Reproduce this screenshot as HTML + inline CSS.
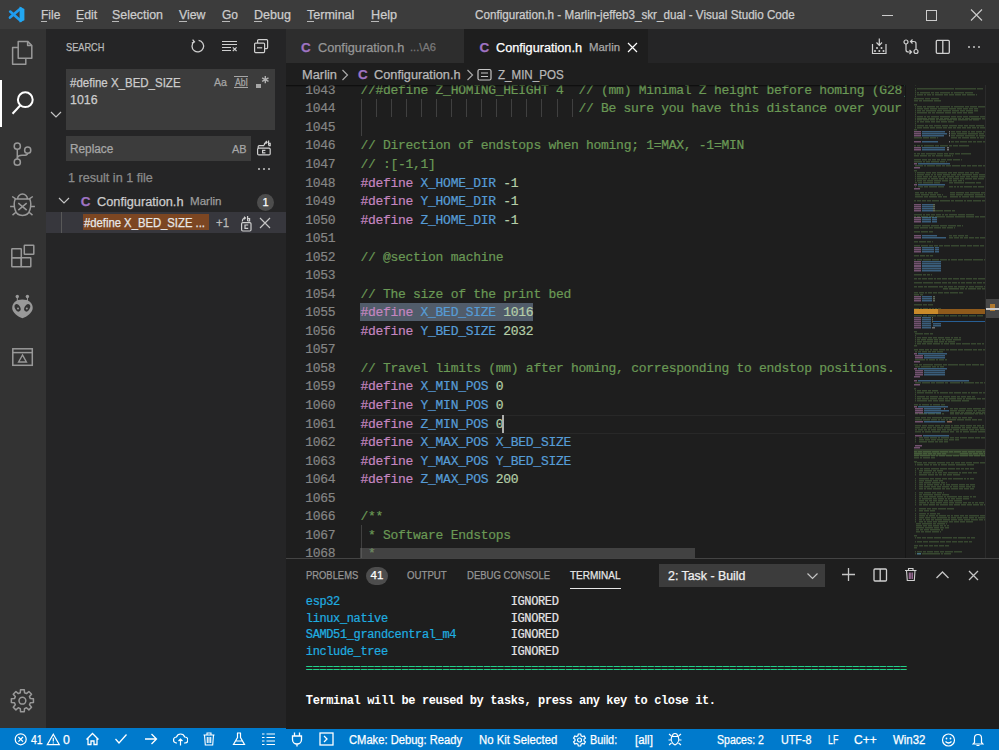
<!DOCTYPE html>
<html><head><meta charset="utf-8"><style>
html,body{margin:0;padding:0;width:999px;height:750px;overflow:hidden;background:#1e1e1e;position:relative;font-family:"Liberation Sans",sans-serif;}
</style></head><body>
<div style="position:absolute;left:0px;top:0px;width:999px;height:29px;background:#3c3c3c;"></div>
<div style="position:absolute;left:0px;top:29px;width:46px;height:700px;background:#333333;"></div>
<div style="position:absolute;left:46px;top:29px;width:240px;height:700px;background:#252526;"></div>
<div style="position:absolute;left:286px;top:29px;width:713px;height:34px;background:#252526;"></div>
<div style="position:absolute;left:286px;top:63px;width:713px;height:666px;background:#1e1e1e;"></div>
<div style="position:absolute;left:0px;top:728px;width:999px;height:22px;background:#007acc;"></div>
<div style="position:absolute;left:41.40px;top:9.49px;font-size:12.3px;line-height:12.3px;color:#cccccc;white-space:pre;font-family:'Liberation Sans', sans-serif;transform:scaleX(0.9747);transform-origin:0.00px 0;-webkit-text-stroke:0.25px #cccccc;">File</div>
<div style="position:absolute;left:76.00px;top:9.49px;font-size:12.3px;line-height:12.3px;color:#cccccc;white-space:pre;font-family:'Liberation Sans', sans-serif;transform:scaleX(1.0000);transform-origin:0.00px 0;-webkit-text-stroke:0.25px #cccccc;">Edit</div>
<div style="position:absolute;left:112.00px;top:9.49px;font-size:12.3px;line-height:12.3px;color:#cccccc;white-space:pre;font-family:'Liberation Sans', sans-serif;transform:scaleX(1.0079);transform-origin:0.00px 0;-webkit-text-stroke:0.25px #cccccc;">Selection</div>
<div style="position:absolute;left:179.00px;top:9.49px;font-size:12.3px;line-height:12.3px;color:#cccccc;white-space:pre;font-family:'Liberation Sans', sans-serif;transform:scaleX(1.0000);transform-origin:0.00px 0;-webkit-text-stroke:0.25px #cccccc;">View</div>
<div style="position:absolute;left:221.60px;top:9.49px;font-size:12.3px;line-height:12.3px;color:#cccccc;white-space:pre;font-family:'Liberation Sans', sans-serif;transform:scaleX(0.9756);transform-origin:0.00px 0;-webkit-text-stroke:0.25px #cccccc;">Go</div>
<div style="position:absolute;left:253.60px;top:9.49px;font-size:12.3px;line-height:12.3px;color:#cccccc;white-space:pre;font-family:'Liberation Sans', sans-serif;transform:scaleX(1.0166);transform-origin:0.00px 0;-webkit-text-stroke:0.25px #cccccc;">Debug</div>
<div style="position:absolute;left:307.00px;top:9.49px;font-size:12.3px;line-height:12.3px;color:#cccccc;white-space:pre;font-family:'Liberation Sans', sans-serif;transform:scaleX(1.0194);transform-origin:0.00px 0;-webkit-text-stroke:0.25px #cccccc;">Terminal</div>
<div style="position:absolute;left:370.60px;top:9.49px;font-size:12.3px;line-height:12.3px;color:#cccccc;white-space:pre;font-family:'Liberation Sans', sans-serif;transform:scaleX(1.0277);transform-origin:0.00px 0;-webkit-text-stroke:0.25px #cccccc;">Help</div>
<div style="position:absolute;left:474.70px;top:9.49px;font-size:12.3px;line-height:12.3px;color:#cccccc;white-space:pre;font-family:'Liberation Sans', sans-serif;transform:scaleX(0.9484);transform-origin:0.00px 0;-webkit-text-stroke:0.25px #cccccc;">Configuration.h - Marlin-jeffeb3_skr_dual - Visual Studio Code</div>
<div style="position:absolute;left:360px;top:415.21999999999997px;width:545px;height:18.5px;background:transparent;box-sizing:border-box;border-top:1.5px solid #282828;border-bottom:1.5px solid #282828;"></div>
<div style="position:absolute;left:360px;top:303px;width:173px;height:18px;background:#515c6a;"></div>
<div style="position:absolute;left:361.0px;top:98.54px;width:1px;height:18.54px;background:#404040;"></div>
<div style="position:absolute;left:376.04px;top:98.54px;width:1px;height:18.54px;background:#404040;"></div>
<div style="position:absolute;left:391.08px;top:98.54px;width:1px;height:18.54px;background:#404040;"></div>
<div style="position:absolute;left:406.12px;top:98.54px;width:1px;height:18.54px;background:#404040;"></div>
<div style="position:absolute;left:421.15999999999997px;top:98.54px;width:1px;height:18.54px;background:#404040;"></div>
<div style="position:absolute;left:436.2px;top:98.54px;width:1px;height:18.54px;background:#404040;"></div>
<div style="position:absolute;left:451.24px;top:98.54px;width:1px;height:18.54px;background:#404040;"></div>
<div style="position:absolute;left:466.28px;top:98.54px;width:1px;height:18.54px;background:#404040;"></div>
<div style="position:absolute;left:481.32px;top:98.54px;width:1px;height:18.54px;background:#404040;"></div>
<div style="position:absolute;left:496.36px;top:98.54px;width:1px;height:18.54px;background:#404040;"></div>
<div style="position:absolute;left:511.4px;top:98.54px;width:1px;height:18.54px;background:#404040;"></div>
<div style="position:absolute;left:526.4399999999999px;top:98.54px;width:1px;height:18.54px;background:#404040;"></div>
<div style="position:absolute;left:541.48px;top:98.54px;width:1px;height:18.54px;background:#404040;"></div>
<div style="position:absolute;left:556.52px;top:98.54px;width:1px;height:18.54px;background:#404040;"></div>
<div style="position:absolute;left:571.5600000000001px;top:98.54px;width:1px;height:18.54px;background:#404040;"></div>
<div style="position:absolute;left:361.0px;top:117.08px;width:1px;height:18.54px;background:#404040;"></div>
<div style="position:absolute;left:361.0px;top:524.96px;width:1px;height:37.08px;background:#404040;"></div>
<div style="position:absolute;left:360.40px;top:83.84px;font-size:13px;line-height:13px;color:#6a9955;white-space:pre;font-family:'Liberation Mono',monospace;letter-spacing:-0.280px;-webkit-text-stroke:0.2px #6a9955;">//#define Z_HOMING_HEIGHT 4  // (mm) Minimal Z height before homing (G28) for Z clearance above the bed, clamps, ...</div>
<div style="position:absolute;left:578.48px;top:102.38px;font-size:13px;line-height:13px;color:#6a9955;white-space:pre;font-family:'Liberation Mono',monospace;letter-spacing:-0.280px;-webkit-text-stroke:0.2px #6a9955;">// Be sure you have this distance over your Z_MAX_POS in case.</div>
<div style="position:absolute;left:360.40px;top:139.46px;font-size:13px;line-height:13px;color:#6a9955;white-space:pre;font-family:'Liberation Mono',monospace;letter-spacing:-0.280px;-webkit-text-stroke:0.2px #6a9955;">// Direction of endstops when homing; 1=MAX, -1=MIN</div>
<div style="position:absolute;left:360.40px;top:158.00px;font-size:13px;line-height:13px;color:#6a9955;white-space:pre;font-family:'Liberation Mono',monospace;letter-spacing:-0.280px;-webkit-text-stroke:0.2px #6a9955;">// :[-1,1]</div>
<div style="position:absolute;left:360.40px;top:176.54px;font-size:13px;line-height:13px;color:#c586c0;white-space:pre;font-family:'Liberation Mono',monospace;letter-spacing:-0.280px;-webkit-text-stroke:0.2px #c586c0;">#define</div>
<div style="position:absolute;left:420.56px;top:176.54px;font-size:13px;line-height:13px;color:#569cd6;white-space:pre;font-family:'Liberation Mono',monospace;letter-spacing:-0.280px;-webkit-text-stroke:0.2px #569cd6;">X_HOME_DIR</div>
<div style="position:absolute;left:503.28px;top:176.54px;font-size:13px;line-height:13px;color:#b5cea8;white-space:pre;font-family:'Liberation Mono',monospace;letter-spacing:-0.280px;-webkit-text-stroke:0.2px #b5cea8;">-1</div>
<div style="position:absolute;left:360.40px;top:195.08px;font-size:13px;line-height:13px;color:#c586c0;white-space:pre;font-family:'Liberation Mono',monospace;letter-spacing:-0.280px;-webkit-text-stroke:0.2px #c586c0;">#define</div>
<div style="position:absolute;left:420.56px;top:195.08px;font-size:13px;line-height:13px;color:#569cd6;white-space:pre;font-family:'Liberation Mono',monospace;letter-spacing:-0.280px;-webkit-text-stroke:0.2px #569cd6;">Y_HOME_DIR</div>
<div style="position:absolute;left:503.28px;top:195.08px;font-size:13px;line-height:13px;color:#b5cea8;white-space:pre;font-family:'Liberation Mono',monospace;letter-spacing:-0.280px;-webkit-text-stroke:0.2px #b5cea8;">-1</div>
<div style="position:absolute;left:360.40px;top:213.62px;font-size:13px;line-height:13px;color:#c586c0;white-space:pre;font-family:'Liberation Mono',monospace;letter-spacing:-0.280px;-webkit-text-stroke:0.2px #c586c0;">#define</div>
<div style="position:absolute;left:420.56px;top:213.62px;font-size:13px;line-height:13px;color:#569cd6;white-space:pre;font-family:'Liberation Mono',monospace;letter-spacing:-0.280px;-webkit-text-stroke:0.2px #569cd6;">Z_HOME_DIR</div>
<div style="position:absolute;left:503.28px;top:213.62px;font-size:13px;line-height:13px;color:#b5cea8;white-space:pre;font-family:'Liberation Mono',monospace;letter-spacing:-0.280px;-webkit-text-stroke:0.2px #b5cea8;">-1</div>
<div style="position:absolute;left:360.40px;top:250.70px;font-size:13px;line-height:13px;color:#6a9955;white-space:pre;font-family:'Liberation Mono',monospace;letter-spacing:-0.280px;-webkit-text-stroke:0.2px #6a9955;">// @section machine</div>
<div style="position:absolute;left:360.40px;top:287.78px;font-size:13px;line-height:13px;color:#6a9955;white-space:pre;font-family:'Liberation Mono',monospace;letter-spacing:-0.280px;-webkit-text-stroke:0.2px #6a9955;">// The size of the print bed</div>
<div style="position:absolute;left:360.40px;top:306.32px;font-size:13px;line-height:13px;color:#c586c0;white-space:pre;font-family:'Liberation Mono',monospace;letter-spacing:-0.280px;-webkit-text-stroke:0.2px #c586c0;">#define</div>
<div style="position:absolute;left:420.56px;top:306.32px;font-size:13px;line-height:13px;color:#569cd6;white-space:pre;font-family:'Liberation Mono',monospace;letter-spacing:-0.280px;-webkit-text-stroke:0.2px #569cd6;">X_BED_SIZE</div>
<div style="position:absolute;left:503.28px;top:306.32px;font-size:13px;line-height:13px;color:#b5cea8;white-space:pre;font-family:'Liberation Mono',monospace;letter-spacing:-0.280px;-webkit-text-stroke:0.2px #b5cea8;">1016</div>
<div style="position:absolute;left:360.40px;top:324.86px;font-size:13px;line-height:13px;color:#c586c0;white-space:pre;font-family:'Liberation Mono',monospace;letter-spacing:-0.280px;-webkit-text-stroke:0.2px #c586c0;">#define</div>
<div style="position:absolute;left:420.56px;top:324.86px;font-size:13px;line-height:13px;color:#569cd6;white-space:pre;font-family:'Liberation Mono',monospace;letter-spacing:-0.280px;-webkit-text-stroke:0.2px #569cd6;">Y_BED_SIZE</div>
<div style="position:absolute;left:503.28px;top:324.86px;font-size:13px;line-height:13px;color:#b5cea8;white-space:pre;font-family:'Liberation Mono',monospace;letter-spacing:-0.280px;-webkit-text-stroke:0.2px #b5cea8;">2032</div>
<div style="position:absolute;left:360.40px;top:361.94px;font-size:13px;line-height:13px;color:#6a9955;white-space:pre;font-family:'Liberation Mono',monospace;letter-spacing:-0.280px;-webkit-text-stroke:0.2px #6a9955;">// Travel limits (mm) after homing, corresponding to endstop positions.</div>
<div style="position:absolute;left:360.40px;top:380.48px;font-size:13px;line-height:13px;color:#c586c0;white-space:pre;font-family:'Liberation Mono',monospace;letter-spacing:-0.280px;-webkit-text-stroke:0.2px #c586c0;">#define</div>
<div style="position:absolute;left:420.56px;top:380.48px;font-size:13px;line-height:13px;color:#569cd6;white-space:pre;font-family:'Liberation Mono',monospace;letter-spacing:-0.280px;-webkit-text-stroke:0.2px #569cd6;">X_MIN_POS</div>
<div style="position:absolute;left:495.76px;top:380.48px;font-size:13px;line-height:13px;color:#b5cea8;white-space:pre;font-family:'Liberation Mono',monospace;letter-spacing:-0.280px;-webkit-text-stroke:0.2px #b5cea8;">0</div>
<div style="position:absolute;left:360.40px;top:399.02px;font-size:13px;line-height:13px;color:#c586c0;white-space:pre;font-family:'Liberation Mono',monospace;letter-spacing:-0.280px;-webkit-text-stroke:0.2px #c586c0;">#define</div>
<div style="position:absolute;left:420.56px;top:399.02px;font-size:13px;line-height:13px;color:#569cd6;white-space:pre;font-family:'Liberation Mono',monospace;letter-spacing:-0.280px;-webkit-text-stroke:0.2px #569cd6;">Y_MIN_POS</div>
<div style="position:absolute;left:495.76px;top:399.02px;font-size:13px;line-height:13px;color:#b5cea8;white-space:pre;font-family:'Liberation Mono',monospace;letter-spacing:-0.280px;-webkit-text-stroke:0.2px #b5cea8;">0</div>
<div style="position:absolute;left:360.40px;top:417.56px;font-size:13px;line-height:13px;color:#c586c0;white-space:pre;font-family:'Liberation Mono',monospace;letter-spacing:-0.280px;-webkit-text-stroke:0.2px #c586c0;">#define</div>
<div style="position:absolute;left:420.56px;top:417.56px;font-size:13px;line-height:13px;color:#569cd6;white-space:pre;font-family:'Liberation Mono',monospace;letter-spacing:-0.280px;-webkit-text-stroke:0.2px #569cd6;">Z_MIN_POS</div>
<div style="position:absolute;left:495.76px;top:417.56px;font-size:13px;line-height:13px;color:#b5cea8;white-space:pre;font-family:'Liberation Mono',monospace;letter-spacing:-0.280px;-webkit-text-stroke:0.2px #b5cea8;">0</div>
<div style="position:absolute;left:360.40px;top:436.10px;font-size:13px;line-height:13px;color:#c586c0;white-space:pre;font-family:'Liberation Mono',monospace;letter-spacing:-0.280px;-webkit-text-stroke:0.2px #c586c0;">#define</div>
<div style="position:absolute;left:420.56px;top:436.10px;font-size:13px;line-height:13px;color:#569cd6;white-space:pre;font-family:'Liberation Mono',monospace;letter-spacing:-0.280px;-webkit-text-stroke:0.2px #569cd6;">X_MAX_POS</div>
<div style="position:absolute;left:495.76px;top:436.10px;font-size:13px;line-height:13px;color:#569cd6;white-space:pre;font-family:'Liberation Mono',monospace;letter-spacing:-0.280px;-webkit-text-stroke:0.2px #569cd6;">X_BED_SIZE</div>
<div style="position:absolute;left:360.40px;top:454.64px;font-size:13px;line-height:13px;color:#c586c0;white-space:pre;font-family:'Liberation Mono',monospace;letter-spacing:-0.280px;-webkit-text-stroke:0.2px #c586c0;">#define</div>
<div style="position:absolute;left:420.56px;top:454.64px;font-size:13px;line-height:13px;color:#569cd6;white-space:pre;font-family:'Liberation Mono',monospace;letter-spacing:-0.280px;-webkit-text-stroke:0.2px #569cd6;">Y_MAX_POS</div>
<div style="position:absolute;left:495.76px;top:454.64px;font-size:13px;line-height:13px;color:#569cd6;white-space:pre;font-family:'Liberation Mono',monospace;letter-spacing:-0.280px;-webkit-text-stroke:0.2px #569cd6;">Y_BED_SIZE</div>
<div style="position:absolute;left:360.40px;top:473.18px;font-size:13px;line-height:13px;color:#c586c0;white-space:pre;font-family:'Liberation Mono',monospace;letter-spacing:-0.280px;-webkit-text-stroke:0.2px #c586c0;">#define</div>
<div style="position:absolute;left:420.56px;top:473.18px;font-size:13px;line-height:13px;color:#569cd6;white-space:pre;font-family:'Liberation Mono',monospace;letter-spacing:-0.280px;-webkit-text-stroke:0.2px #569cd6;">Z_MAX_POS</div>
<div style="position:absolute;left:495.76px;top:473.18px;font-size:13px;line-height:13px;color:#b5cea8;white-space:pre;font-family:'Liberation Mono',monospace;letter-spacing:-0.280px;-webkit-text-stroke:0.2px #b5cea8;">200</div>
<div style="position:absolute;left:360.40px;top:510.26px;font-size:13px;line-height:13px;color:#6a9955;white-space:pre;font-family:'Liberation Mono',monospace;letter-spacing:-0.280px;-webkit-text-stroke:0.2px #6a9955;">/**</div>
<div style="position:absolute;left:367.92px;top:528.80px;font-size:13px;line-height:13px;color:#6a9955;white-space:pre;font-family:'Liberation Mono',monospace;letter-spacing:-0.280px;-webkit-text-stroke:0.2px #6a9955;">* Software Endstops</div>
<div style="position:absolute;left:367.92px;top:547.34px;font-size:13px;line-height:13px;color:#6a9955;white-space:pre;font-family:'Liberation Mono',monospace;letter-spacing:-0.280px;-webkit-text-stroke:0.2px #6a9955;">*</div>
<div style="position:absolute;left:305.2px;top:83.84px;font-size:13px;line-height:13px;color:#858585;white-space:pre;font-family:'Liberation Mono',monospace;letter-spacing:-0.280px;-webkit-text-stroke:0.2px #858585;">1043</div>
<div style="position:absolute;left:305.2px;top:102.38px;font-size:13px;line-height:13px;color:#858585;white-space:pre;font-family:'Liberation Mono',monospace;letter-spacing:-0.280px;-webkit-text-stroke:0.2px #858585;">1044</div>
<div style="position:absolute;left:305.2px;top:120.92px;font-size:13px;line-height:13px;color:#858585;white-space:pre;font-family:'Liberation Mono',monospace;letter-spacing:-0.280px;-webkit-text-stroke:0.2px #858585;">1045</div>
<div style="position:absolute;left:305.2px;top:139.46px;font-size:13px;line-height:13px;color:#858585;white-space:pre;font-family:'Liberation Mono',monospace;letter-spacing:-0.280px;-webkit-text-stroke:0.2px #858585;">1046</div>
<div style="position:absolute;left:305.2px;top:158.00px;font-size:13px;line-height:13px;color:#858585;white-space:pre;font-family:'Liberation Mono',monospace;letter-spacing:-0.280px;-webkit-text-stroke:0.2px #858585;">1047</div>
<div style="position:absolute;left:305.2px;top:176.54px;font-size:13px;line-height:13px;color:#858585;white-space:pre;font-family:'Liberation Mono',monospace;letter-spacing:-0.280px;-webkit-text-stroke:0.2px #858585;">1048</div>
<div style="position:absolute;left:305.2px;top:195.08px;font-size:13px;line-height:13px;color:#858585;white-space:pre;font-family:'Liberation Mono',monospace;letter-spacing:-0.280px;-webkit-text-stroke:0.2px #858585;">1049</div>
<div style="position:absolute;left:305.2px;top:213.62px;font-size:13px;line-height:13px;color:#858585;white-space:pre;font-family:'Liberation Mono',monospace;letter-spacing:-0.280px;-webkit-text-stroke:0.2px #858585;">1050</div>
<div style="position:absolute;left:305.2px;top:232.16px;font-size:13px;line-height:13px;color:#858585;white-space:pre;font-family:'Liberation Mono',monospace;letter-spacing:-0.280px;-webkit-text-stroke:0.2px #858585;">1051</div>
<div style="position:absolute;left:305.2px;top:250.70px;font-size:13px;line-height:13px;color:#858585;white-space:pre;font-family:'Liberation Mono',monospace;letter-spacing:-0.280px;-webkit-text-stroke:0.2px #858585;">1052</div>
<div style="position:absolute;left:305.2px;top:269.24px;font-size:13px;line-height:13px;color:#858585;white-space:pre;font-family:'Liberation Mono',monospace;letter-spacing:-0.280px;-webkit-text-stroke:0.2px #858585;">1053</div>
<div style="position:absolute;left:305.2px;top:287.78px;font-size:13px;line-height:13px;color:#858585;white-space:pre;font-family:'Liberation Mono',monospace;letter-spacing:-0.280px;-webkit-text-stroke:0.2px #858585;">1054</div>
<div style="position:absolute;left:305.2px;top:306.32px;font-size:13px;line-height:13px;color:#858585;white-space:pre;font-family:'Liberation Mono',monospace;letter-spacing:-0.280px;-webkit-text-stroke:0.2px #858585;">1055</div>
<div style="position:absolute;left:305.2px;top:324.86px;font-size:13px;line-height:13px;color:#858585;white-space:pre;font-family:'Liberation Mono',monospace;letter-spacing:-0.280px;-webkit-text-stroke:0.2px #858585;">1056</div>
<div style="position:absolute;left:305.2px;top:343.40px;font-size:13px;line-height:13px;color:#858585;white-space:pre;font-family:'Liberation Mono',monospace;letter-spacing:-0.280px;-webkit-text-stroke:0.2px #858585;">1057</div>
<div style="position:absolute;left:305.2px;top:361.94px;font-size:13px;line-height:13px;color:#858585;white-space:pre;font-family:'Liberation Mono',monospace;letter-spacing:-0.280px;-webkit-text-stroke:0.2px #858585;">1058</div>
<div style="position:absolute;left:305.2px;top:380.48px;font-size:13px;line-height:13px;color:#858585;white-space:pre;font-family:'Liberation Mono',monospace;letter-spacing:-0.280px;-webkit-text-stroke:0.2px #858585;">1059</div>
<div style="position:absolute;left:305.2px;top:399.02px;font-size:13px;line-height:13px;color:#858585;white-space:pre;font-family:'Liberation Mono',monospace;letter-spacing:-0.280px;-webkit-text-stroke:0.2px #858585;">1060</div>
<div style="position:absolute;left:305.2px;top:417.56px;font-size:13px;line-height:13px;color:#858585;white-space:pre;font-family:'Liberation Mono',monospace;letter-spacing:-0.280px;-webkit-text-stroke:0.2px #858585;">1061</div>
<div style="position:absolute;left:305.2px;top:436.10px;font-size:13px;line-height:13px;color:#858585;white-space:pre;font-family:'Liberation Mono',monospace;letter-spacing:-0.280px;-webkit-text-stroke:0.2px #858585;">1062</div>
<div style="position:absolute;left:305.2px;top:454.64px;font-size:13px;line-height:13px;color:#858585;white-space:pre;font-family:'Liberation Mono',monospace;letter-spacing:-0.280px;-webkit-text-stroke:0.2px #858585;">1063</div>
<div style="position:absolute;left:305.2px;top:473.18px;font-size:13px;line-height:13px;color:#858585;white-space:pre;font-family:'Liberation Mono',monospace;letter-spacing:-0.280px;-webkit-text-stroke:0.2px #858585;">1064</div>
<div style="position:absolute;left:305.2px;top:491.72px;font-size:13px;line-height:13px;color:#858585;white-space:pre;font-family:'Liberation Mono',monospace;letter-spacing:-0.280px;-webkit-text-stroke:0.2px #858585;">1065</div>
<div style="position:absolute;left:305.2px;top:510.26px;font-size:13px;line-height:13px;color:#858585;white-space:pre;font-family:'Liberation Mono',monospace;letter-spacing:-0.280px;-webkit-text-stroke:0.2px #858585;">1066</div>
<div style="position:absolute;left:305.2px;top:528.80px;font-size:13px;line-height:13px;color:#858585;white-space:pre;font-family:'Liberation Mono',monospace;letter-spacing:-0.280px;-webkit-text-stroke:0.2px #858585;">1067</div>
<div style="position:absolute;left:305.2px;top:547.34px;font-size:13px;line-height:13px;color:#858585;white-space:pre;font-family:'Liberation Mono',monospace;letter-spacing:-0.280px;-webkit-text-stroke:0.2px #858585;">1068</div>
<div style="position:absolute;left:502px;top:414.5px;width:2px;height:18px;background:#aeafad;"></div>
<div style="position:absolute;left:360px;top:548px;width:335px;height:10px;background:rgba(121,121,121,0.4);"></div>
<div style="position:absolute;left:906px;top:85px;width:93px;height:473px;background:#1e1e1e;"></div>
<div style="position:absolute;left:905px;top:85px;width:1px;height:473px;background:#161616;"></div>
<div style="position:absolute;left:985px;top:85px;width:14px;height:473px;background:#1e1e1e;border-left:1px solid #2b2b2b;box-sizing:border-box;"></div>
<div style="position:absolute;left:286px;top:29px;width:178px;height:34px;background:#2d2d2d;"></div>
<div style="position:absolute;left:464px;top:29px;width:184px;height:34px;background:#1e1e1e;"></div>
<div style="position:absolute;left:286px;top:85px;width:619px;height:2px;background:linear-gradient(#000a,#0000);"></div>
<div style="position:absolute;left:286px;top:558px;width:713px;height:1px;background:#444444;"></div>
<div style="position:absolute;left:286px;top:559px;width:713px;height:170px;background:#1e1e1e;"></div>
<div style="position:absolute;left:65.60px;top:42.29px;font-size:11px;line-height:11px;color:#bbbbbb;white-space:pre;font-family:'Liberation Sans', sans-serif;transform:scaleX(0.8384);transform-origin:0.00px 0;-webkit-text-stroke:0.25px #bbbbbb;">SEARCH</div>
<div style="position:absolute;left:65.6px;top:69px;width:209px;height:61px;background:#3c3c3c;"></div>
<div style="position:absolute;left:70.40px;top:76.79px;font-size:12.3px;line-height:12.3px;color:#cccccc;white-space:pre;font-family:'Liberation Sans', sans-serif;transform:scaleX(0.9349);transform-origin:0.00px 0;-webkit-text-stroke:0.25px #cccccc;">#define X_BED_SIZE</div>
<div style="position:absolute;left:70.40px;top:94.09px;font-size:12.3px;line-height:12.3px;color:#cccccc;white-space:pre;font-family:'Liberation Sans', sans-serif;transform:scaleX(1.0073);transform-origin:0.00px 0;-webkit-text-stroke:0.25px #cccccc;">1016</div>
<div style="position:absolute;left:65.6px;top:135.8px;width:185px;height:25.2px;background:#3c3c3c;"></div>
<div style="position:absolute;left:70.40px;top:142.89px;font-size:12.3px;line-height:12.3px;color:#a6a6a6;white-space:pre;font-family:'Liberation Sans', sans-serif;transform:scaleX(0.9601);transform-origin:0.00px 0;-webkit-text-stroke:0.25px #a6a6a6;">Replace</div>
<div style="position:absolute;left:68.00px;top:172.29px;font-size:12.3px;line-height:12.3px;color:#8b8b8b;white-space:pre;font-family:'Liberation Sans', sans-serif;transform:scaleX(1.0254);transform-origin:0.00px 0;-webkit-text-stroke:0.25px #8b8b8b;">1 result in 1 file</div>
<div style="position:absolute;left:96.80px;top:195.59px;font-size:12.3px;line-height:12.3px;color:#cccccc;white-space:pre;font-family:'Liberation Sans', sans-serif;transform:scaleX(1.0372);transform-origin:0.00px 0;-webkit-text-stroke:0.25px #cccccc;">Configuration.h</div>
<div style="position:absolute;left:189.80px;top:196.27px;font-size:11.5px;line-height:11.5px;color:#9d9d9d;white-space:pre;font-family:'Liberation Sans', sans-serif;transform:scaleX(1.0064);transform-origin:0.00px 0;-webkit-text-stroke:0.25px #9d9d9d;">Marlin</div>
<div style="position:absolute;left:257px;top:193.5px;width:17px;height:17.3px;background:#4d4d4d;border-radius:9px;"></div>
<div style="position:absolute;left:262.50px;top:196.69px;font-size:11px;line-height:11px;color:#ffffff;white-space:pre;font-family:'Liberation Sans', sans-serif;-webkit-text-stroke:0.25px #ffffff;">1</div>
<div style="position:absolute;left:46px;top:212px;width:240px;height:21px;background:#37373d;"></div>
<div style="position:absolute;left:61px;top:212px;width:1px;height:21px;background:#585858;"></div>
<div style="position:absolute;left:83px;top:214px;width:126px;height:16px;background:#7c4622;"></div>
<div style="position:absolute;left:84.00px;top:216.59px;font-size:12.3px;line-height:12.3px;color:#e8e8e8;white-space:pre;font-family:'Liberation Sans', sans-serif;transform:scaleX(0.9167);transform-origin:0.00px 0;-webkit-text-stroke:0.25px #e8e8e8;">#define X_BED_SIZE ...</div>
<div style="position:absolute;left:216.00px;top:216.59px;font-size:12.3px;line-height:12.3px;color:#bbbbbb;white-space:pre;font-family:'Liberation Sans', sans-serif;transform:scaleX(0.9286);transform-origin:0.00px 0;-webkit-text-stroke:0.25px #bbbbbb;">+1</div>
<div style="position:absolute;left:317.60px;top:41.59px;font-size:12.3px;line-height:12.3px;color:#969696;white-space:pre;font-family:'Liberation Sans', sans-serif;transform:scaleX(1.0360);transform-origin:0.00px 0;-webkit-text-stroke:0.25px #969696;">Configuration.h</div>
<div style="position:absolute;left:410.00px;top:42.27px;font-size:11.5px;line-height:11.5px;color:#7a7a7a;white-space:pre;font-family:'Liberation Sans', sans-serif;transform:scaleX(0.9701);transform-origin:0.00px 0;-webkit-text-stroke:0.25px #7a7a7a;">...\A6</div>
<div style="position:absolute;left:496.00px;top:41.59px;font-size:12.3px;line-height:12.3px;color:#ffffff;white-space:pre;font-family:'Liberation Sans', sans-serif;transform:scaleX(1.0312);transform-origin:0.00px 0;-webkit-text-stroke:0.25px #ffffff;">Configuration.h</div>
<div style="position:absolute;left:589.00px;top:42.27px;font-size:11.5px;line-height:11.5px;color:#a8a8a8;white-space:pre;font-family:'Liberation Sans', sans-serif;transform:scaleX(0.9904);transform-origin:0.00px 0;-webkit-text-stroke:0.25px #a8a8a8;">Marlin</div>
<div style="position:absolute;left:302.00px;top:68.59px;font-size:12.3px;line-height:12.3px;color:#b8b8b8;white-space:pre;font-family:'Liberation Sans', sans-serif;transform:scaleX(1.0448);transform-origin:0.00px 0;-webkit-text-stroke:0.25px #b8b8b8;">Marlin</div>
<div style="position:absolute;left:374.40px;top:68.59px;font-size:12.3px;line-height:12.3px;color:#b8b8b8;white-space:pre;font-family:'Liberation Sans', sans-serif;transform:scaleX(1.0384);transform-origin:0.00px 0;-webkit-text-stroke:0.25px #b8b8b8;">Configuration.h</div>
<div style="position:absolute;left:498.40px;top:68.59px;font-size:12.3px;line-height:12.3px;color:#b8b8b8;white-space:pre;font-family:'Liberation Sans', sans-serif;transform:scaleX(0.9412);transform-origin:0.00px 0;-webkit-text-stroke:0.25px #b8b8b8;">Z_MIN_POS</div>
<div style="position:absolute;left:305.80px;top:570.49px;font-size:11px;line-height:11px;color:#969696;white-space:pre;font-family:'Liberation Sans', sans-serif;transform:scaleX(0.8543);transform-origin:0.00px 0;-webkit-text-stroke:0.25px #969696;">PROBLEMS</div>
<div style="position:absolute;left:365.8px;top:566.8px;width:22px;height:18.4px;background:#4d4d4d;border-radius:9px;"></div>
<div style="position:absolute;left:370.50px;top:570.27px;font-size:11.5px;line-height:11.5px;color:#ffffff;white-space:pre;font-family:'Liberation Sans', sans-serif;-webkit-text-stroke:0.25px #ffffff;">41</div>
<div style="position:absolute;left:406.70px;top:570.49px;font-size:11px;line-height:11px;color:#969696;white-space:pre;font-family:'Liberation Sans', sans-serif;transform:scaleX(0.8783);transform-origin:0.00px 0;-webkit-text-stroke:0.25px #969696;">OUTPUT</div>
<div style="position:absolute;left:466.80px;top:570.49px;font-size:11px;line-height:11px;color:#969696;white-space:pre;font-family:'Liberation Sans', sans-serif;transform:scaleX(0.8667);transform-origin:0.00px 0;-webkit-text-stroke:0.25px #969696;">DEBUG CONSOLE</div>
<div style="position:absolute;left:569.50px;top:570.49px;font-size:11px;line-height:11px;color:#e7e7e7;white-space:pre;font-family:'Liberation Sans', sans-serif;transform:scaleX(0.9083);transform-origin:0.00px 0;-webkit-text-stroke:0.25px #e7e7e7;">TERMINAL</div>
<div style="position:absolute;left:569.5px;top:588px;width:51px;height:1px;background:#e7e7e7;"></div>
<div style="position:absolute;left:659px;top:564px;width:166px;height:22.7px;background:#3c3c3c;"></div>
<div style="position:absolute;left:668.00px;top:570.29px;font-size:12.3px;line-height:12.3px;color:#f0f0f0;white-space:pre;font-family:'Liberation Sans', sans-serif;transform:scaleX(1.0065);transform-origin:0.00px 0;-webkit-text-stroke:0.25px #f0f0f0;">2: Task - Build</div>
<div style="position:absolute;left:305.80px;top:596.30px;font-size:12px;line-height:12px;color:#1eaee0;white-space:pre;font-family:'Liberation Mono',monospace;letter-spacing:-0.370px;-webkit-text-stroke:0.2px #1eaee0;">esp32</div>
<div style="position:absolute;left:510.70px;top:596.30px;font-size:12px;line-height:12px;color:#e5e5e5;white-space:pre;font-family:'Liberation Mono',monospace;letter-spacing:-0.370px;-webkit-text-stroke:0.2px #e5e5e5;">IGNORED</div>
<div style="position:absolute;left:305.80px;top:612.70px;font-size:12px;line-height:12px;color:#1eaee0;white-space:pre;font-family:'Liberation Mono',monospace;letter-spacing:-0.370px;-webkit-text-stroke:0.2px #1eaee0;">linux_native</div>
<div style="position:absolute;left:510.70px;top:612.70px;font-size:12px;line-height:12px;color:#e5e5e5;white-space:pre;font-family:'Liberation Mono',monospace;letter-spacing:-0.370px;-webkit-text-stroke:0.2px #e5e5e5;">IGNORED</div>
<div style="position:absolute;left:305.80px;top:629.10px;font-size:12px;line-height:12px;color:#1eaee0;white-space:pre;font-family:'Liberation Mono',monospace;letter-spacing:-0.370px;-webkit-text-stroke:0.2px #1eaee0;">SAMD51_grandcentral_m4</div>
<div style="position:absolute;left:510.70px;top:629.10px;font-size:12px;line-height:12px;color:#e5e5e5;white-space:pre;font-family:'Liberation Mono',monospace;letter-spacing:-0.370px;-webkit-text-stroke:0.2px #e5e5e5;">IGNORED</div>
<div style="position:absolute;left:305.80px;top:645.50px;font-size:12px;line-height:12px;color:#1eaee0;white-space:pre;font-family:'Liberation Mono',monospace;letter-spacing:-0.370px;-webkit-text-stroke:0.2px #1eaee0;">include_tree</div>
<div style="position:absolute;left:510.70px;top:645.50px;font-size:12px;line-height:12px;color:#e5e5e5;white-space:pre;font-family:'Liberation Mono',monospace;letter-spacing:-0.370px;-webkit-text-stroke:0.2px #e5e5e5;">IGNORED</div>
<div style="position:absolute;left:305.80px;top:663.30px;font-size:12px;line-height:12px;color:#23d18b;white-space:pre;font-family:'Liberation Mono',monospace;letter-spacing:-0.370px;-webkit-text-stroke:0.2px #23d18b;">========================================================================================</div>
<div style="position:absolute;left:305.80px;top:695.30px;font-size:12px;line-height:12px;color:#ffffff;white-space:pre;font-family:'Liberation Mono',monospace;letter-spacing:-0.370px;font-weight:bold;-webkit-text-stroke:0px #ffffff;">Terminal will be reused by tasks, press any key to close it.</div>
<div style="position:absolute;left:30.60px;top:733.59px;font-size:12.3px;line-height:12.3px;color:#ffffff;white-space:pre;font-family:'Liberation Sans', sans-serif;transform:scaleX(0.8540);transform-origin:0.00px 0;-webkit-text-stroke:0.25px #ffffff;">41</div>
<div style="position:absolute;left:63.00px;top:733.59px;font-size:12.3px;line-height:12.3px;color:#ffffff;white-space:pre;font-family:'Liberation Sans', sans-serif;-webkit-text-stroke:0.25px #ffffff;">0</div>
<div style="position:absolute;left:349.00px;top:733.59px;font-size:12.3px;line-height:12.3px;color:#ffffff;white-space:pre;font-family:'Liberation Sans', sans-serif;transform:scaleX(0.9092);transform-origin:0.00px 0;-webkit-text-stroke:0.25px #ffffff;">CMake: Debug: Ready</div>
<div style="position:absolute;left:478.70px;top:733.59px;font-size:12.3px;line-height:12.3px;color:#ffffff;white-space:pre;font-family:'Liberation Sans', sans-serif;transform:scaleX(0.9233);transform-origin:0.00px 0;-webkit-text-stroke:0.25px #ffffff;">No Kit Selected</div>
<div style="position:absolute;left:590.20px;top:733.59px;font-size:12.3px;line-height:12.3px;color:#ffffff;white-space:pre;font-family:'Liberation Sans', sans-serif;transform:scaleX(0.8831);transform-origin:0.00px 0;-webkit-text-stroke:0.25px #ffffff;">Build:</div>
<div style="position:absolute;left:634.60px;top:733.59px;font-size:12.3px;line-height:12.3px;color:#ffffff;white-space:pre;font-family:'Liberation Sans', sans-serif;transform:scaleX(0.9319);transform-origin:0.00px 0;-webkit-text-stroke:0.25px #ffffff;">[all]</div>
<div style="position:absolute;left:717.40px;top:733.59px;font-size:12.3px;line-height:12.3px;color:#ffffff;white-space:pre;font-family:'Liberation Sans', sans-serif;transform:scaleX(0.8592);transform-origin:0.00px 0;-webkit-text-stroke:0.25px #ffffff;">Spaces: 2</div>
<div style="position:absolute;left:780.80px;top:733.59px;font-size:12.3px;line-height:12.3px;color:#ffffff;white-space:pre;font-family:'Liberation Sans', sans-serif;transform:scaleX(0.8764);transform-origin:0.00px 0;-webkit-text-stroke:0.25px #ffffff;">UTF-8</div>
<div style="position:absolute;left:828.00px;top:733.59px;font-size:12.3px;line-height:12.3px;color:#ffffff;white-space:pre;font-family:'Liberation Sans', sans-serif;transform:scaleX(0.7153);transform-origin:0.00px 0;-webkit-text-stroke:0.25px #ffffff;">LF</div>
<div style="position:absolute;left:854.00px;top:733.59px;font-size:12.3px;line-height:12.3px;color:#ffffff;white-space:pre;font-family:'Liberation Sans', sans-serif;transform:scaleX(0.9741);transform-origin:0.00px 0;-webkit-text-stroke:0.25px #ffffff;">C++</div>
<div style="position:absolute;left:893.00px;top:733.59px;font-size:12.3px;line-height:12.3px;color:#ffffff;white-space:pre;font-family:'Liberation Sans', sans-serif;transform:scaleX(0.9284);transform-origin:0.00px 0;-webkit-text-stroke:0.25px #ffffff;">Win32</div>
<svg style="position:absolute;left:0px;top:0px;" width="30" height="30" viewBox="0 0 30 30"><g stroke="#1f9cf0" stroke-width="2.7" stroke-linecap="round" fill="none"><path d="M10.2 11.6 L20.6 20.8"/><path d="M10 17.6 L20.6 8.4"/></g><path d="M19.6 6.6 L24.4 8.9 L24.4 20.3 L19.6 22.6 Z" fill="#22a7f2"/></svg>
<div style="position:absolute;left:41.4px;top:21px;width:6px;height:1px;background:#b8b8b8;"></div>
<div style="position:absolute;left:76px;top:21px;width:7px;height:1px;background:#b8b8b8;"></div>
<div style="position:absolute;left:112px;top:21px;width:7px;height:1px;background:#b8b8b8;"></div>
<div style="position:absolute;left:179px;top:21px;width:8px;height:1px;background:#b8b8b8;"></div>
<div style="position:absolute;left:221.6px;top:21px;width:8px;height:1px;background:#b8b8b8;"></div>
<div style="position:absolute;left:253.6px;top:21px;width:8px;height:1px;background:#b8b8b8;"></div>
<div style="position:absolute;left:307px;top:21px;width:7px;height:1px;background:#b8b8b8;"></div>
<div style="position:absolute;left:370.6px;top:21px;width:8px;height:1px;background:#b8b8b8;"></div>
<div style="position:absolute;left:882px;top:15px;width:11px;height:1px;background:#cccccc;"></div>
<div style="position:absolute;left:926px;top:10px;width:10.5px;height:10.5px;background:transparent;box-sizing:border-box;border:1px solid #cccccc;"></div>
<svg style="position:absolute;left:970px;top:9px;" width="13" height="12" viewBox="0 0 13 12"><path d="M1 0.5 L12 11.5 M12 0.5 L1 11.5" stroke="#cccccc" stroke-width="1.1"/></svg>
<svg style="position:absolute;left:10px;top:39px;" width="26" height="28" viewBox="0 0 26 28"><g fill="none" stroke="#999999" stroke-width="1.5" stroke-linejoin="round"><path d="M8.2 2.4 H17.6 L21.8 6.6 V19.2 H8.2 Z"/><path d="M17.6 2.4 V6.6 H21.8"/><path d="M8.2 8.4 H2.6 V25.2 H15.8 V19.2"/></g></svg>
<div style="position:absolute;left:0px;top:80px;width:2px;height:47px;background:#ffffff;"></div>
<svg style="position:absolute;left:10px;top:88px;" width="26" height="30" viewBox="0 0 26 30"><g fill="none" stroke="#ffffff" stroke-width="2"><circle cx="15.3" cy="11.7" r="7.4"/><path d="M10.4 17.3 L2.5 25.8"/></g></svg>
<svg style="position:absolute;left:10px;top:138px;" width="26" height="30" viewBox="0 0 26 30"><g fill="none" stroke="#999999" stroke-width="1.5"><circle cx="7.3" cy="8.2" r="3.1"/><circle cx="7.3" cy="24.2" r="3.1"/><circle cx="17.7" cy="12.2" r="3.1"/><path d="M7.3 11.3 V21.1"/><path d="M7.3 20 Q8 17.3 12 17.3 H15 Q17.7 17 17.7 15.3"/></g></svg>
<svg style="position:absolute;left:8px;top:190px;" width="30" height="30" viewBox="0 0 30 30"><g fill="none" stroke="#999999" stroke-width="1.5"><path d="M9.6 9 A4.9 4.9 0 0 1 19.4 9"/><path d="M7.2 9 H21.8 C23 12 23 16 22 19.5 C21 23.5 18 25.4 14.5 25.4 C11 25.4 8 23.5 7 19.5 C6 16 6 12 7.2 9 Z"/><path d="M10.3 13.2 L18.7 20.2 M18.7 13.2 L10.3 20.2"/><path d="M4.2 6.5 L7.7 8.9 M24.8 6.5 L21.3 8.9 M2.1 16.6 H6.6 M26.9 16.6 H22.4 M4.5 25.1 L7.9 22.2 M24.5 25.1 L21.1 22.2"/></g></svg>
<svg style="position:absolute;left:9px;top:241.5px;" width="30" height="30" viewBox="0 0 30 30"><g fill="none" stroke="#999999" stroke-width="1.5"><rect x="2.8" y="6.8" width="9.5" height="9" rx="0.5"/><rect x="2.8" y="15.8" width="9.5" height="9" rx="0.5"/><rect x="12.3" y="15.8" width="9.5" height="9" rx="0.5"/><rect x="15.3" y="3.3" width="9.5" height="9" rx="0.5"/></g></svg>
<svg style="position:absolute;left:8px;top:290px;" width="30" height="30" viewBox="0 0 30 30"><g fill="#999999"><circle cx="9.3" cy="6.5" r="1.7"/><circle cx="19.4" cy="6.5" r="1.7"/><rect x="8.8" y="6.5" width="1" height="5"/><rect x="18.9" y="6.5" width="1" height="5"/><path d="M14.4 9.6 C20.5 9.6 24.7 13 24.7 18 C24.7 22.5 19 26.8 14.4 28.2 C9.8 26.8 4.2 22.5 4.2 18 C4.2 13 8.3 9.6 14.4 9.6 Z"/></g><g fill="#333333"><ellipse cx="9.6" cy="17.8" rx="2.6" ry="4" transform="rotate(-28 9.6 17.8)"/><ellipse cx="19.2" cy="17.8" rx="2.6" ry="4" transform="rotate(28 19.2 17.8)"/></g><g fill="#999999"><circle cx="10" cy="18.4" r="1"/><circle cx="18.8" cy="18.4" r="1"/></g></svg>
<svg style="position:absolute;left:10px;top:346px;" width="30" height="30" viewBox="0 0 30 30"><g fill="none" stroke="#999999" stroke-width="1.5"><rect x="2.8" y="2.8" width="19.5" height="16.5"/><path d="M2.8 6.6 H22.3"/><path d="M12.5 9 L8.6 16 H16.4 Z" stroke-width="1.4"/></g></svg>
<svg style="position:absolute;left:8px;top:686px;" width="30" height="30" viewBox="0 0 30 30"><g fill="none" stroke="#999999" stroke-width="1.5" stroke-linejoin="round"><path d="M12.29 6.78 L12.51 3.66 L16.29 3.66 L16.51 6.78 L18.51 7.61 L20.87 5.55 L23.55 8.23 L21.49 10.59 L22.32 12.59 L25.44 12.81 L25.44 16.59 L22.32 16.81 L21.49 18.81 L23.55 21.17 L20.87 23.85 L18.51 21.79 L16.51 22.62 L16.29 25.74 L12.51 25.74 L12.29 22.62 L10.29 21.79 L7.93 23.85 L5.25 21.17 L7.31 18.81 L6.48 16.81 L3.36 16.59 L3.36 12.81 L6.48 12.59 L7.31 10.59 L5.25 8.23 L7.93 5.55 L10.29 7.61 Z"/><circle cx="14.4" cy="14.7" r="3.4"/></g></svg>
<svg style="position:absolute;left:189px;top:38px;" width="17" height="17" viewBox="0 0 17 17"><g fill="none" stroke="#d0d0d0" stroke-width="1.3"><path d="M5.2 3.6 A5.8 5.8 0 1 0 9.6 2.4"/><path d="M3.6 1.6 L5.4 3.8 L2.8 5.2" /></g></svg>
<svg style="position:absolute;left:221px;top:38px;" width="18" height="17" viewBox="0 0 18 17"><g fill="none" stroke="#d0d0d0" stroke-width="1.1"><path d="M1 3.5 H16 M1 6.5 H16 M1 9.5 H10 M1 12.5 H10"/><path d="M11.8 9.3 L15.6 13 M15.6 9.3 L11.8 13"/></g></svg>
<svg style="position:absolute;left:253px;top:38px;" width="17" height="17" viewBox="0 0 17 17"><g fill="none" stroke="#d0d0d0" stroke-width="1.2"><rect x="4.6" y="1.6" width="10" height="9" rx="1"/><rect x="1.6" y="5.1" width="10" height="9.5" rx="1" fill="#252526"/><path d="M4 9.8 H9.2"/></g></svg>
<div style="position:absolute;left:214.00px;top:76.69px;font-size:11px;line-height:11px;color:#a6a6a6;white-space:pre;font-family:'Liberation Sans', sans-serif;transform:scaleX(0.9630);transform-origin:0.00px 0;-webkit-text-stroke:0.25px #a6a6a6;">Aa</div>
<div style="position:absolute;left:234.50px;top:77.11px;font-size:10.5px;line-height:10.5px;color:#a6a6a6;white-space:pre;font-family:'Liberation Sans', sans-serif;transform:scaleX(0.8228);transform-origin:0.00px 0;-webkit-text-stroke:0.25px #a6a6a6;">AbI</div>
<div style="position:absolute;left:234px;top:76px;width:14px;height:1px;background:#a6a6a6;"></div>
<div style="position:absolute;left:234px;top:87px;width:14px;height:1px;background:#a6a6a6;"></div>
<div style="position:absolute;left:256.3px;top:84px;width:4.6px;height:4px;background:#a6a6a6;"></div>
<svg style="position:absolute;left:260px;top:74px;" width="11" height="11" viewBox="0 0 11 11"><g stroke="#b0b0b0" stroke-width="1.4"><path d="M5.3 1.9 V9.3 M2.1 3.8 L8.5 7.4 M2.1 7.4 L8.5 3.8"/></g></svg>
<svg style="position:absolute;left:49px;top:110px;" width="14" height="10" viewBox="0 0 14 10"><path d="M2 2 L7 7 L12 2" fill="none" stroke="#c5c5c5" stroke-width="1.2"/></svg>
<div style="position:absolute;left:232.00px;top:143.57px;font-size:11.5px;line-height:11.5px;color:#a6a6a6;white-space:pre;font-family:'Liberation Sans', sans-serif;transform:scaleX(0.9477);transform-origin:0.00px 0;-webkit-text-stroke:0.25px #a6a6a6;">AB</div>
<svg style="position:absolute;left:255px;top:139px;" width="18" height="18" viewBox="0 0 18 18"><g fill="none" stroke="#d0d0d0" stroke-width="1.2"><rect x="2.6" y="9.1" width="12.6" height="6.8" rx="1.2"/><path d="M3.2 9 V7.6 Q3.2 6.6 4.2 6.6 H9"/><path d="M10.4 11.3 H7.6 V13.9 H10.4"/><path d="M9.2 6.4 Q9.2 3.3 12 3.3 M10.8 2 L12.1 3.3 L10.8 4.6"/><path d="M13.6 1.5 V6.6 M13.6 4.3 H15.2 V6.6 H13.6"/></g></svg>
<div style="position:absolute;left:258px;top:168px;width:2.2px;height:2.2px;background:#c5c5c5;border-radius:1px;"></div>
<div style="position:absolute;left:263px;top:168px;width:2.2px;height:2.2px;background:#c5c5c5;border-radius:1px;"></div>
<div style="position:absolute;left:268px;top:168px;width:2.2px;height:2.2px;background:#c5c5c5;border-radius:1px;"></div>
<svg style="position:absolute;left:57px;top:196px;" width="14" height="10" viewBox="0 0 14 10"><path d="M2 2 L7 7 L12 2" fill="none" stroke="#c5c5c5" stroke-width="1.2"/></svg>
<div style="position:absolute;left:80.70px;top:195.07px;font-size:13.5px;line-height:13.5px;color:#a074c4;white-space:pre;font-family:'Liberation Sans', sans-serif;font-weight:bold;-webkit-text-stroke:0.25px #a074c4;">C</div>
<div style="position:absolute;left:301.00px;top:41.07px;font-size:13.5px;line-height:13.5px;color:#a074c4;white-space:pre;font-family:'Liberation Sans', sans-serif;font-weight:bold;-webkit-text-stroke:0.25px #a074c4;">C</div>
<div style="position:absolute;left:479.60px;top:41.07px;font-size:13.5px;line-height:13.5px;color:#a074c4;white-space:pre;font-family:'Liberation Sans', sans-serif;font-weight:bold;-webkit-text-stroke:0.25px #a074c4;">C</div>
<div style="position:absolute;left:358.00px;top:68.07px;font-size:13.5px;line-height:13.5px;color:#a074c4;white-space:pre;font-family:'Liberation Sans', sans-serif;font-weight:bold;-webkit-text-stroke:0.25px #a074c4;">C</div>
<svg style="position:absolute;left:239px;top:215px;" width="14" height="17" viewBox="0 0 14 17"><g fill="none" stroke="#d0d0d0" stroke-width="1.2"><rect x="2.6" y="7.6" width="9.4" height="8.4" rx="1.2"/><path d="M9.2 10 H6 V13.4 H9.2"/><path d="M3.4 6.6 Q3.4 3 6.4 3 M5 1.7 L6.4 3 L5 4.3"/><path d="M8.6 1 V6 M8.6 3.6 H10.6 V6 H8.6"/></g></svg>
<svg style="position:absolute;left:259px;top:216px;" width="12" height="14" viewBox="0 0 12 14"><path d="M1 2 L11 12 M11 2 L1 12" stroke="#c5c5c5" stroke-width="1.2"/></svg>
<svg style="position:absolute;left:627px;top:42px;" width="11" height="11" viewBox="0 0 11 11"><path d="M1 1 L10 10 M10 1 L1 10" stroke="#ffffff" stroke-width="1.2"/></svg>
<svg style="position:absolute;left:341px;top:69px;" width="8" height="12" viewBox="0 0 8 12"><path d="M1.5 1 L6.5 6 L1.5 11" fill="none" stroke="#a9a9a9" stroke-width="1.2"/></svg>
<svg style="position:absolute;left:466px;top:69px;" width="8" height="12" viewBox="0 0 8 12"><path d="M1.5 1 L6.5 6 L1.5 11" fill="none" stroke="#a9a9a9" stroke-width="1.2"/></svg>
<svg style="position:absolute;left:477px;top:68px;" width="16" height="14" viewBox="0 0 16 14"><g fill="none" stroke="#c5c5c5" stroke-width="1.2"><rect x="1" y="1.5" width="13" height="10.5" rx="1.5"/><path d="M4 5 H11 M4 8.5 H11"/></g></svg>
<svg style="position:absolute;left:871px;top:37px;" width="17" height="18" viewBox="0 0 17 18"><g fill="none" stroke="#d0d0d0" stroke-width="1.2"><path d="M1.5 7 V16.5 H15 V7"/><path d="M8.3 1.5 V8 M5.5 5.5 L8.3 8.3 L11 5.5"/></g><g fill="#d0d0d0"><circle cx="6" cy="11" r="1"/><circle cx="10.5" cy="11" r="1"/><circle cx="4" cy="14" r="1"/><circle cx="8.3" cy="14" r="1"/><circle cx="12.5" cy="14" r="1"/></g></svg>
<svg style="position:absolute;left:902px;top:38px;" width="18" height="18" viewBox="0 0 18 18"><g fill="none" stroke="#d0d0d0" stroke-width="1.2"><circle cx="4" cy="4" r="2"/><circle cx="14" cy="13.5" r="2"/><path d="M4 6 V12 Q4 14 6.5 14 H9.5 M7.5 12 L9.5 14 L7.5 16"/><path d="M14 11.5 V5.5 Q14 3.5 11.5 3.5 H8.5 M10.5 1.5 L8.5 3.5 L10.5 5.5"/></g></svg>
<svg style="position:absolute;left:935px;top:39px;" width="16" height="16" viewBox="0 0 16 16"><g fill="none" stroke="#d0d0d0" stroke-width="1.3"><rect x="1.3" y="1.3" width="13" height="13" rx="1"/><path d="M7.8 1.3 V14.3"/></g></svg>
<div style="position:absolute;left:967.5px;top:46px;width:2.2px;height:2.2px;background:#c5c5c5;border-radius:1px;"></div>
<div style="position:absolute;left:972.8px;top:46px;width:2.2px;height:2.2px;background:#c5c5c5;border-radius:1px;"></div>
<div style="position:absolute;left:978px;top:46px;width:2.2px;height:2.2px;background:#c5c5c5;border-radius:1px;"></div>
<svg style="position:absolute;left:806px;top:572px;" width="13" height="9" viewBox="0 0 13 9"><path d="M1.5 1.5 L6.5 6.5 L11.5 1.5" fill="none" stroke="#c5c5c5" stroke-width="1.2"/></svg>
<svg style="position:absolute;left:841px;top:567px;" width="15" height="15" viewBox="0 0 15 15"><path d="M7.5 1 V14 M1 7.5 H14" stroke="#c5c5c5" stroke-width="1.3"/></svg>
<svg style="position:absolute;left:873px;top:568px;" width="15" height="14" viewBox="0 0 15 14"><g fill="none" stroke="#d0d0d0" stroke-width="1.3"><rect x="1" y="1" width="12.5" height="12" rx="1"/><path d="M7.2 1 V13"/></g></svg>
<svg style="position:absolute;left:904px;top:567px;" width="14" height="15" viewBox="0 0 14 15"><g fill="none" stroke="#d0d0d0" stroke-width="1.1"><path d="M1 3.5 H12.5 M4.5 3.5 V1.5 H9 V3.5"/><path d="M2.5 3.5 L3.3 13.5 H10.3 L11 3.5"/></g><path d="M5.3 5.5 V12 M6.8 5.5 V12 M8.3 5.5 V12" stroke="#c586c0" stroke-width="0.9"/></svg>
<svg style="position:absolute;left:935px;top:570px;" width="15" height="10" viewBox="0 0 15 10"><path d="M1.5 8 L7.5 2 L13.5 8" fill="none" stroke="#c5c5c5" stroke-width="1.3"/></svg>
<svg style="position:absolute;left:968px;top:570px;" width="11" height="11" viewBox="0 0 11 11"><path d="M1 1 L10 10 M10 1 L1 10" stroke="#c5c5c5" stroke-width="1.3"/></svg>
<svg style="position:absolute;left:13px;top:733px;" width="16" height="13" viewBox="0 0 16 13"><g fill="none" stroke="#fff" stroke-width="1.2"><circle cx="7.7" cy="6.3" r="5.5"/><path d="M5.4 4 L10 8.6 M10 4 L5.4 8.6"/></g></svg>
<svg style="position:absolute;left:46px;top:733px;" width="15" height="13" viewBox="0 0 15 13"><path d="M7.3 1.3 L13.3 11.7 H1.3 Z M7.3 4.8 V8.5 M7.3 9.5 V10.5" fill="none" stroke="#fff" stroke-width="1.2"/></svg>
<svg style="position:absolute;left:85px;top:732px;" width="15" height="14" viewBox="0 0 15 14"><path d="M1.5 7.5 L7.5 1.5 L13.5 7.5 M3 6 V12.5 H6 V9 H9 V12.5 H12 V6" fill="none" stroke="#fff" stroke-width="1.3"/></svg>
<svg style="position:absolute;left:114px;top:733px;" width="14" height="12" viewBox="0 0 14 12"><path d="M1.5 6 L5 10 L12.5 1.5" fill="none" stroke="#fff" stroke-width="1.3"/></svg>
<svg style="position:absolute;left:144px;top:733px;" width="14" height="12" viewBox="0 0 14 12"><path d="M1 6 H12.5 M7.5 1 L12.5 6 L7.5 11" fill="none" stroke="#fff" stroke-width="1.3"/></svg>
<svg style="position:absolute;left:173px;top:732px;" width="15" height="14" viewBox="0 0 15 14"><path d="M4 11 H3.5 A3 3 0 0 1 3.5 5 A4.3 4.3 0 0 1 11.7 5 A3 3 0 0 1 12 11 H11 M7.5 13.5 V7 M5.5 9 L7.5 7 L9.5 9" fill="none" stroke="#fff" stroke-width="1.2"/></svg>
<svg style="position:absolute;left:203px;top:732px;" width="12" height="14" viewBox="0 0 12 14"><g fill="none" stroke="#fff" stroke-width="1.1"><path d="M0.5 3 H11.5 M4 3 V1 H8 V3 M1.5 3 L2.3 13 H9.7 L10.5 3 M4.3 5 V11 M6 5 V11 M7.7 5 V11"/></g></svg>
<svg style="position:absolute;left:232px;top:732px;" width="14" height="14" viewBox="0 0 14 14"><path d="M5 1 H9 M5.5 1 V5.5 L1.5 12.5 H12.5 L8.5 5.5 V1 M3.5 9 H10.5" fill="none" stroke="#fff" stroke-width="1.2"/></svg>
<svg style="position:absolute;left:261px;top:732px;" width="15" height="14" viewBox="0 0 15 14"><g stroke="#fff" stroke-width="1.2"><path d="M5.5 2 H14 M5.5 5.5 H14 M5.5 9 H14 M5.5 12.5 H14 M1 2 H3.5 M1 5.5 H3.5 M1 9 H3.5 M1 12.5 H3.5"/></g></svg>
<svg style="position:absolute;left:291px;top:732px;" width="12" height="15" viewBox="0 0 12 15"><path d="M3.5 0.5 V4 M8.5 0.5 V4 M1.5 4 H10.5 V7.5 A4.5 4.5 0 0 1 1.5 7.5 Z M6 12 V14.5" fill="none" stroke="#fff" stroke-width="1.3"/></svg>
<svg style="position:absolute;left:319px;top:732px;" width="15" height="14" viewBox="0 0 15 14"><g fill="none" stroke="#fff" stroke-width="1.3"><rect x="1" y="1" width="13" height="12"/><path d="M5 4 L8 7 L5 10"/></g></svg>
<svg style="position:absolute;left:572px;top:733px;" width="15" height="14" viewBox="0 0 15 14"><g fill="none" stroke="#fff" stroke-width="1.2"><path d="M6.3 1 H8.7 L9.1 2.8 L10.5 3.6 L12.2 3 L13.4 5.1 L12 6.3 V7.7 L13.4 8.9 L12.2 11 L10.5 10.4 L9.1 11.2 L8.7 13 H6.3 L5.9 11.2 L4.5 10.4 L2.8 11 L1.6 8.9 L3 7.7 V6.3 L1.6 5.1 L2.8 3 L4.5 3.6 L5.9 2.8 Z"/><circle cx="7.5" cy="7" r="2"/></g></svg>
<svg style="position:absolute;left:668px;top:732px;" width="14" height="14" viewBox="0 0 14 14"><g fill="none" stroke="#fff" stroke-width="1.1"><path d="M4.5 4 A2.5 2.5 0 0 1 9.5 4 M3.5 4.5 H10.5 M3.8 4.5 C2.8 7 3 11 7 13 C11 11 11.2 7 10.2 4.5 M1 2 L3.5 4 M13 2 L10.5 4 M0.5 8 H3 M13.5 8 H11 M1 13 L3.5 11 M13 13 L10.5 11"/></g></svg>
<svg style="position:absolute;left:941px;top:733px;" width="15" height="14" viewBox="0 0 15 14"><g fill="none" stroke="#fff" stroke-width="1.2"><circle cx="7.5" cy="7" r="6"/><path d="M4.5 8.5 Q7.5 11.5 10.5 8.5"/></g><circle cx="5.5" cy="5.5" r="0.9" fill="#fff"/><circle cx="9.5" cy="5.5" r="0.9" fill="#fff"/></svg>
<svg style="position:absolute;left:972px;top:732px;" width="12" height="15" viewBox="0 0 12 15"><path d="M2.5 10.5 V6 A3.5 3.5 0 0 1 9.5 6 V10.5 L11 12 H1 Z M4.5 13.5 H7.5" fill="none" stroke="#fff" stroke-width="1.2"/></svg>
<svg style="position:absolute;left:0;top:0" width="999" height="750" viewBox="0 0 999 750"><defs><clipPath id="mmc"><rect x="906" y="85" width="79" height="473"/></clipPath></defs><g clip-path="url(#mmc)"><path fill="rgba(106,153,85,0.34)" d="M915 84.00h1v1.5h-1zM915 88.00h1v1.5h-1zM917 88.00h5v1.5h-5zM923 88.00h4v1.5h-4zM928 88.00h6v1.5h-6zM935 88.00h2v1.5h-2zM938 88.00h3v1.5h-3zM942 88.00h8v1.5h-8zM951 88.00h3v1.5h-3zM955 88.00h5v1.5h-5zM961 88.00h10v1.5h-10zM915 88.00h1v1.5h-1zM917 88.00h2v1.5h-2zM920 88.00h8v1.5h-8zM929 88.00h4v1.5h-4zM934 88.00h2v1.5h-2zM937 88.00h3v1.5h-3zM941 88.00h6v1.5h-6zM948 88.00h6v1.5h-6zM955 88.00h3v1.5h-3zM959 88.00h4v1.5h-4zM964 88.00h3v1.5h-3zM968 88.00h8v1.5h-8zM977 88.00h6v1.5h-6zM915 90.00h1v1.5h-1zM915 92.00h1v1.5h-1zM917 92.00h2v1.5h-2zM920 92.00h10v1.5h-10zM931 92.00h3v1.5h-3zM935 92.00h4v1.5h-4zM940 92.00h10v1.5h-10zM951 92.00h2v1.5h-2zM954 92.00h10v1.5h-10zM965 92.00h8v1.5h-8zM915 94.00h1v1.5h-1zM917 94.00h6v1.5h-6zM924 94.00h2v1.5h-2zM927 94.00h4v1.5h-4zM932 94.00h2v1.5h-2zM935 94.00h8v1.5h-8zM944 94.00h4v1.5h-4zM949 94.00h5v1.5h-5zM955 94.00h6v1.5h-6zM962 94.00h4v1.5h-4zM967 94.00h8v1.5h-8zM976 94.00h1v1.5h-1zM915 96.00h1v1.5h-1zM914 98.00h10v1.5h-10zM925 98.00h5v1.5h-5zM931 98.00h8v1.5h-8zM914 100.00h4v1.5h-4zM919 100.00h3v1.5h-3zM923 100.00h10v1.5h-10zM934 100.00h7v1.5h-7zM914 104.00h3v1.5h-3zM915 106.00h1v1.5h-1zM917 106.00h5v1.5h-5zM923 106.00h3v1.5h-3zM927 106.00h8v1.5h-8zM936 106.00h3v1.5h-3zM940 106.00h10v1.5h-10zM951 106.00h2v1.5h-2zM954 106.00h10v1.5h-10zM965 106.00h4v1.5h-4zM970 106.00h7v1.5h-7zM978 106.00h7v1.5h-7zM915 108.00h1v1.5h-1zM917 108.00h6v1.5h-6zM924 108.00h5v1.5h-5zM930 108.00h7v1.5h-7zM938 108.00h10v1.5h-10zM949 108.00h7v1.5h-7zM957 108.00h5v1.5h-5zM963 108.00h5v1.5h-5zM969 108.00h4v1.5h-4zM974 108.00h4v1.5h-4zM915 110.00h1v1.5h-1zM917 110.00h4v1.5h-4zM922 110.00h3v1.5h-3zM926 110.00h10v1.5h-10zM937 110.00h5v1.5h-5zM943 110.00h8v1.5h-8zM952 110.00h7v1.5h-7zM960 110.00h5v1.5h-5zM966 110.00h7v1.5h-7zM974 110.00h4v1.5h-4zM915 112.00h1v1.5h-1zM917 112.00h10v1.5h-10zM928 112.00h3v1.5h-3zM932 112.00h3v1.5h-3zM936 112.00h8v1.5h-8zM945 112.00h6v1.5h-6zM952 112.00h4v1.5h-4zM957 112.00h5v1.5h-5zM963 112.00h4v1.5h-4zM968 112.00h5v1.5h-5zM915 114.00h1v1.5h-1zM915 116.00h1v1.5h-1zM917 116.00h6v1.5h-6zM924 116.00h2v1.5h-2zM927 116.00h3v1.5h-3zM931 116.00h8v1.5h-8zM940 116.00h10v1.5h-10zM951 116.00h5v1.5h-5zM957 116.00h5v1.5h-5zM963 116.00h5v1.5h-5zM969 116.00h10v1.5h-10zM980 116.00h5v1.5h-5zM915 118.00h1v1.5h-1zM917 118.00h10v1.5h-10zM928 118.00h7v1.5h-7zM936 118.00h3v1.5h-3zM940 118.00h3v1.5h-3zM944 118.00h5v1.5h-5zM950 118.00h7v1.5h-7zM958 118.00h3v1.5h-3zM962 118.00h2v1.5h-2zM965 118.00h5v1.5h-5zM971 118.00h10v1.5h-10zM982 118.00h3v1.5h-3zM915 119.00h1v1.5h-1zM917 119.00h5v1.5h-5zM923 119.00h6v1.5h-6zM930 119.00h5v1.5h-5zM936 119.00h2v1.5h-2zM939 119.00h7v1.5h-7zM947 119.00h5v1.5h-5zM953 119.00h4v1.5h-4zM958 119.00h10v1.5h-10zM969 119.00h3v1.5h-3zM973 119.00h6v1.5h-6zM915 121.00h1v1.5h-1zM917 121.00h2v1.5h-2zM920 121.00h4v1.5h-4zM925 121.00h5v1.5h-5zM931 121.00h4v1.5h-4zM936 121.00h4v1.5h-4zM941 121.00h6v1.5h-6zM948 121.00h6v1.5h-6zM915 123.00h1v1.5h-1zM915 125.00h1v1.5h-1zM917 125.00h7v1.5h-7zM925 125.00h3v1.5h-3zM929 125.00h4v1.5h-4zM934 125.00h7v1.5h-7zM942 125.00h6v1.5h-6zM949 125.00h8v1.5h-8zM958 125.00h5v1.5h-5zM964 125.00h4v1.5h-4zM969 125.00h6v1.5h-6zM976 125.00h8v1.5h-8zM915 127.00h1v1.5h-1zM917 127.00h5v1.5h-5zM923 127.00h6v1.5h-6zM930 127.00h5v1.5h-5zM936 127.00h6v1.5h-6zM943 127.00h4v1.5h-4zM948 127.00h4v1.5h-4zM953 127.00h3v1.5h-3zM957 127.00h4v1.5h-4zM962 127.00h4v1.5h-4zM967 127.00h4v1.5h-4zM972 127.00h4v1.5h-4zM977 127.00h2v1.5h-2zM980 127.00h5v1.5h-5zM914 129.00h3v1.5h-3zM951 131.00h4v1.5h-4zM956 131.00h5v1.5h-5zM962 131.00h5v1.5h-5zM968 131.00h2v1.5h-2zM971 131.00h4v1.5h-4zM976 131.00h6v1.5h-6zM983 131.00h2v1.5h-2zM951 133.00h5v1.5h-5zM957 133.00h10v1.5h-10zM968 133.00h10v1.5h-10zM979 133.00h5v1.5h-5zM951 135.00h4v1.5h-4zM956 135.00h8v1.5h-8zM965 135.00h10v1.5h-10zM976 135.00h2v1.5h-2zM979 135.00h6v1.5h-6zM914 137.00h8v1.5h-8zM923 137.00h6v1.5h-6zM930 137.00h6v1.5h-6zM937 137.00h1v1.5h-1zM951 137.00h6v1.5h-6zM958 137.00h3v1.5h-3zM962 137.00h7v1.5h-7zM970 137.00h6v1.5h-6zM977 137.00h2v1.5h-2zM980 137.00h4v1.5h-4zM951 141.00h3v1.5h-3zM955 141.00h4v1.5h-4zM960 141.00h7v1.5h-7zM968 141.00h4v1.5h-4zM973 141.00h3v1.5h-3zM977 141.00h5v1.5h-5zM983 141.00h2v1.5h-2zM914 145.00h2v1.5h-2zM917 145.00h3v1.5h-3zM921 145.00h2v1.5h-2zM924 145.00h10v1.5h-10zM935 145.00h4v1.5h-4zM940 145.00h8v1.5h-8zM949 145.00h3v1.5h-3zM953 145.00h5v1.5h-5zM959 145.00h10v1.5h-10zM914 153.00h2v1.5h-2zM917 153.00h3v1.5h-3zM921 153.00h4v1.5h-4zM926 153.00h10v1.5h-10zM937 153.00h6v1.5h-6zM944 153.00h4v1.5h-4zM949 153.00h5v1.5h-5zM955 153.00h5v1.5h-5zM961 153.00h10v1.5h-10zM914 155.00h5v1.5h-5zM920 155.00h7v1.5h-7zM928 155.00h3v1.5h-3zM932 155.00h3v1.5h-3zM936 155.00h7v1.5h-7zM944 155.00h7v1.5h-7zM952 155.00h1v1.5h-1zM914 159.00h7v1.5h-7zM922 159.00h5v1.5h-5zM928 159.00h3v1.5h-3zM932 159.00h4v1.5h-4zM937 159.00h3v1.5h-3zM941 159.00h5v1.5h-5zM947 159.00h5v1.5h-5zM953 159.00h7v1.5h-7zM961 159.00h1v1.5h-1zM914 161.00h8v1.5h-8zM923 161.00h2v1.5h-2zM926 161.00h4v1.5h-4zM931 161.00h8v1.5h-8zM940 161.00h5v1.5h-5zM946 161.00h1v1.5h-1zM915 165.00h8v1.5h-8zM924 165.00h2v1.5h-2zM927 165.00h8v1.5h-8zM936 165.00h5v1.5h-5zM942 165.00h3v1.5h-3zM946 165.00h5v1.5h-5zM952 165.00h8v1.5h-8zM961 165.00h5v1.5h-5zM967 165.00h4v1.5h-4zM972 165.00h5v1.5h-5zM978 165.00h4v1.5h-4zM983 165.00h2v1.5h-2zM914 170.00h3v1.5h-3zM915 172.00h1v1.5h-1zM917 172.00h8v1.5h-8zM926 172.00h5v1.5h-5zM932 172.00h4v1.5h-4zM937 172.00h10v1.5h-10zM948 172.00h4v1.5h-4zM953 172.00h4v1.5h-4zM958 172.00h6v1.5h-6zM965 172.00h4v1.5h-4zM970 172.00h4v1.5h-4zM975 172.00h4v1.5h-4zM915 174.00h1v1.5h-1zM917 174.00h7v1.5h-7zM925 174.00h5v1.5h-5zM931 174.00h2v1.5h-2zM934 174.00h2v1.5h-2zM937 174.00h5v1.5h-5zM943 174.00h7v1.5h-7zM951 174.00h5v1.5h-5zM957 174.00h4v1.5h-4zM962 174.00h10v1.5h-10zM973 174.00h5v1.5h-5zM979 174.00h6v1.5h-6zM915 176.00h1v1.5h-1zM917 176.00h5v1.5h-5zM923 176.00h5v1.5h-5zM929 176.00h3v1.5h-3zM933 176.00h4v1.5h-4zM938 176.00h3v1.5h-3zM942 176.00h4v1.5h-4zM947 176.00h7v1.5h-7zM955 176.00h4v1.5h-4zM960 176.00h5v1.5h-5zM966 176.00h4v1.5h-4zM971 176.00h7v1.5h-7zM979 176.00h6v1.5h-6zM915 178.00h1v1.5h-1zM917 178.00h10v1.5h-10zM928 178.00h2v1.5h-2zM931 178.00h7v1.5h-7zM939 178.00h5v1.5h-5zM945 178.00h3v1.5h-3zM949 178.00h3v1.5h-3zM953 178.00h6v1.5h-6zM960 178.00h4v1.5h-4zM965 178.00h7v1.5h-7zM973 178.00h4v1.5h-4zM978 178.00h6v1.5h-6zM915 180.00h1v1.5h-1zM917 180.00h5v1.5h-5zM923 180.00h3v1.5h-3zM927 180.00h6v1.5h-6zM934 180.00h7v1.5h-7zM942 180.00h6v1.5h-6zM949 180.00h3v1.5h-3zM953 180.00h4v1.5h-4zM958 180.00h4v1.5h-4zM963 180.00h1v1.5h-1zM915 182.00h2v1.5h-2zM918 182.00h4v1.5h-4zM923 182.00h10v1.5h-10zM934 182.00h6v1.5h-6zM949 182.00h4v1.5h-4zM954 182.00h10v1.5h-10zM965 182.00h10v1.5h-10zM976 182.00h5v1.5h-5zM915 186.00h1v1.5h-1zM918 186.00h5v1.5h-5zM924 186.00h4v1.5h-4zM929 186.00h8v1.5h-8zM938 186.00h6v1.5h-6zM949 186.00h4v1.5h-4zM954 186.00h2v1.5h-2zM957 186.00h2v1.5h-2zM960 186.00h3v1.5h-3zM964 186.00h8v1.5h-8zM973 186.00h4v1.5h-4zM978 186.00h6v1.5h-6zM915 192.00h4v1.5h-4zM920 192.00h4v1.5h-4zM925 192.00h2v1.5h-2zM928 192.00h5v1.5h-5zM934 192.00h4v1.5h-4zM950 192.00h5v1.5h-5zM956 192.00h8v1.5h-8zM965 192.00h4v1.5h-4zM970 192.00h10v1.5h-10zM981 192.00h4v1.5h-4zM915 194.00h5v1.5h-5zM921 194.00h8v1.5h-8zM930 194.00h6v1.5h-6zM937 194.00h4v1.5h-4zM942 194.00h1v1.5h-1zM950 194.00h5v1.5h-5zM956 194.00h7v1.5h-7zM964 194.00h10v1.5h-10zM975 194.00h8v1.5h-8zM984 194.00h1v1.5h-1zM915 196.00h8v1.5h-8zM924 196.00h4v1.5h-4zM929 196.00h8v1.5h-8zM938 196.00h4v1.5h-4zM943 196.00h4v1.5h-4zM950 196.00h8v1.5h-8zM959 196.00h2v1.5h-2zM962 196.00h7v1.5h-7zM970 196.00h4v1.5h-4zM975 196.00h10v1.5h-10zM914 200.00h2v1.5h-2zM917 200.00h4v1.5h-4zM922 200.00h4v1.5h-4zM927 200.00h4v1.5h-4zM932 200.00h7v1.5h-7zM940 200.00h10v1.5h-10zM951 200.00h3v1.5h-3zM955 200.00h8v1.5h-8zM964 200.00h2v1.5h-2zM967 200.00h5v1.5h-5zM973 200.00h8v1.5h-8zM982 200.00h3v1.5h-3zM935 210.00h8v1.5h-8zM944 210.00h7v1.5h-7zM952 210.00h3v1.5h-3zM914 214.00h8v1.5h-8zM923 214.00h2v1.5h-2zM926 214.00h4v1.5h-4zM931 214.00h4v1.5h-4zM936 214.00h5v1.5h-5zM942 214.00h2v1.5h-2zM945 214.00h3v1.5h-3zM949 214.00h8v1.5h-8zM958 214.00h7v1.5h-7zM966 214.00h8v1.5h-8zM914 216.00h2v1.5h-2zM917 216.00h3v1.5h-3zM921 216.00h7v1.5h-7zM929 216.00h5v1.5h-5zM935 216.00h10v1.5h-10zM946 216.00h8v1.5h-8zM955 216.00h10v1.5h-10zM966 216.00h8v1.5h-8zM975 216.00h4v1.5h-4zM980 216.00h5v1.5h-5zM914 225.00h7v1.5h-7zM922 225.00h8v1.5h-8zM931 225.00h8v1.5h-8zM940 225.00h7v1.5h-7zM948 225.00h8v1.5h-8zM957 225.00h4v1.5h-4zM962 225.00h1v1.5h-1zM914 227.00h5v1.5h-5zM920 227.00h8v1.5h-8zM929 227.00h4v1.5h-4zM934 227.00h7v1.5h-7zM942 227.00h4v1.5h-4zM947 227.00h6v1.5h-6zM954 227.00h1v1.5h-1zM914 231.00h6v1.5h-6zM921 231.00h7v1.5h-7zM929 231.00h4v1.5h-4zM949 235.00h3v1.5h-3zM953 235.00h4v1.5h-4zM958 235.00h6v1.5h-6zM965 235.00h3v1.5h-3zM949 237.00h4v1.5h-4zM954 237.00h5v1.5h-5zM960 237.00h3v1.5h-3zM964 237.00h4v1.5h-4zM969 237.00h5v1.5h-5zM975 237.00h4v1.5h-4zM980 237.00h5v1.5h-5zM914 241.00h4v1.5h-4zM919 241.00h7v1.5h-7zM927 241.00h4v1.5h-4zM932 241.00h1v1.5h-1zM914 245.00h6v1.5h-6zM921 245.00h7v1.5h-7zM929 245.00h4v1.5h-4zM934 245.00h4v1.5h-4zM939 245.00h4v1.5h-4zM944 245.00h6v1.5h-6zM951 245.00h8v1.5h-8zM960 245.00h6v1.5h-6zM967 245.00h5v1.5h-5zM973 245.00h6v1.5h-6zM980 245.00h4v1.5h-4zM914 255.00h5v1.5h-5zM920 255.00h5v1.5h-5zM926 255.00h3v1.5h-3zM930 255.00h3v1.5h-3zM914 259.00h2v1.5h-2zM917 259.00h5v1.5h-5zM923 259.00h8v1.5h-8zM932 259.00h7v1.5h-7zM940 259.00h7v1.5h-7zM948 259.00h2v1.5h-2zM951 259.00h6v1.5h-6zM958 259.00h5v1.5h-5zM964 259.00h8v1.5h-8zM973 259.00h10v1.5h-10zM984 259.00h1v1.5h-1zM914 274.00h8v1.5h-8zM923 274.00h3v1.5h-3zM927 274.00h3v1.5h-3zM931 274.00h1v1.5h-1zM914 278.00h3v1.5h-3zM918 278.00h3v1.5h-3zM922 278.00h5v1.5h-5zM928 278.00h5v1.5h-5zM934 278.00h2v1.5h-2zM937 278.00h4v1.5h-4zM942 278.00h5v1.5h-5zM948 278.00h4v1.5h-4zM953 278.00h6v1.5h-6zM960 278.00h5v1.5h-5zM966 278.00h6v1.5h-6zM973 278.00h4v1.5h-4zM978 278.00h7v1.5h-7zM914 282.00h8v1.5h-8zM923 282.00h10v1.5h-10zM934 282.00h7v1.5h-7zM942 282.00h5v1.5h-5zM948 282.00h3v1.5h-3zM952 282.00h5v1.5h-5zM958 282.00h2v1.5h-2zM961 282.00h4v1.5h-4zM966 282.00h6v1.5h-6zM973 282.00h3v1.5h-3zM977 282.00h5v1.5h-5zM983 282.00h2v1.5h-2zM914 286.00h3v1.5h-3zM918 286.00h5v1.5h-5zM924 286.00h3v1.5h-3zM928 286.00h10v1.5h-10zM939 286.00h4v1.5h-4zM944 286.00h3v1.5h-3zM948 286.00h5v1.5h-5zM954 286.00h3v1.5h-3zM958 286.00h7v1.5h-7zM966 286.00h2v1.5h-2zM969 286.00h5v1.5h-5zM975 286.00h8v1.5h-8zM984 286.00h1v1.5h-1zM943 288.00h5v1.5h-5zM949 288.00h10v1.5h-10zM960 288.00h4v1.5h-4zM965 288.00h2v1.5h-2zM968 288.00h8v1.5h-8zM977 288.00h4v1.5h-4zM982 288.00h3v1.5h-3zM914 292.00h4v1.5h-4zM919 292.00h5v1.5h-5zM925 292.00h2v1.5h-2zM928 292.00h4v1.5h-4zM933 292.00h4v1.5h-4zM938 292.00h5v1.5h-5zM944 292.00h5v1.5h-5zM950 292.00h8v1.5h-8zM959 292.00h4v1.5h-4zM914 294.00h5v1.5h-5zM920 294.00h3v1.5h-3zM914 304.00h8v1.5h-8zM923 304.00h4v1.5h-4zM928 304.00h5v1.5h-5zM914 308.00h5v1.5h-5zM920 308.00h2v1.5h-2zM923 308.00h5v1.5h-5zM929 308.00h2v1.5h-2zM932 308.00h2v1.5h-2zM935 308.00h2v1.5h-2zM938 308.00h3v1.5h-3zM914 315.00h8v1.5h-8zM923 315.00h4v1.5h-4zM928 315.00h8v1.5h-8zM937 315.00h7v1.5h-7zM945 315.00h4v1.5h-4zM950 315.00h7v1.5h-7zM958 315.00h3v1.5h-3zM962 315.00h6v1.5h-6zM969 315.00h7v1.5h-7zM977 315.00h6v1.5h-6zM914 331.00h3v1.5h-3zM915 333.00h8v1.5h-8zM924 333.00h5v1.5h-5zM930 333.00h3v1.5h-3zM915 335.00h1v1.5h-1zM915 337.00h1v1.5h-1zM917 337.00h4v1.5h-4zM922 337.00h5v1.5h-5zM928 337.00h4v1.5h-4zM933 337.00h4v1.5h-4zM938 337.00h6v1.5h-6zM945 337.00h5v1.5h-5zM951 337.00h2v1.5h-2zM954 337.00h4v1.5h-4zM959 337.00h2v1.5h-2zM915 339.00h1v1.5h-1zM917 339.00h3v1.5h-3zM921 339.00h5v1.5h-5zM927 339.00h6v1.5h-6zM934 339.00h4v1.5h-4zM939 339.00h2v1.5h-2zM942 339.00h3v1.5h-3zM946 339.00h6v1.5h-6zM953 339.00h8v1.5h-8zM915 341.00h1v1.5h-1zM917 341.00h5v1.5h-5zM923 341.00h10v1.5h-10zM934 341.00h4v1.5h-4zM939 341.00h5v1.5h-5zM945 341.00h2v1.5h-2zM948 341.00h7v1.5h-7zM915 343.00h1v1.5h-1zM917 343.00h4v1.5h-4zM922 343.00h4v1.5h-4zM927 343.00h5v1.5h-5zM933 343.00h7v1.5h-7zM941 343.00h2v1.5h-2zM944 343.00h5v1.5h-5zM950 343.00h5v1.5h-5zM956 343.00h5v1.5h-5zM962 343.00h8v1.5h-8zM971 343.00h5v1.5h-5zM977 343.00h4v1.5h-4zM982 343.00h2v1.5h-2zM914 345.00h3v1.5h-3zM914 349.00h4v1.5h-4zM919 349.00h5v1.5h-5zM925 349.00h4v1.5h-4zM930 349.00h2v1.5h-2zM933 349.00h5v1.5h-5zM939 349.00h6v1.5h-6zM946 349.00h3v1.5h-3zM950 349.00h7v1.5h-7zM958 349.00h5v1.5h-5zM964 349.00h8v1.5h-8zM973 349.00h4v1.5h-4zM978 349.00h4v1.5h-4zM983 349.00h2v1.5h-2zM915 351.00h2v1.5h-2zM918 351.00h3v1.5h-3zM922 351.00h5v1.5h-5zM928 351.00h3v1.5h-3zM932 351.00h4v1.5h-4zM937 351.00h6v1.5h-6zM915 359.00h10v1.5h-10zM926 359.00h2v1.5h-2zM929 359.00h6v1.5h-6zM936 359.00h2v1.5h-2zM939 359.00h5v1.5h-5zM945 359.00h2v1.5h-2zM914 364.00h4v1.5h-4zM919 364.00h3v1.5h-3zM923 364.00h10v1.5h-10zM934 364.00h8v1.5h-8zM943 364.00h4v1.5h-4zM948 364.00h10v1.5h-10zM959 364.00h6v1.5h-6zM966 364.00h5v1.5h-5zM972 364.00h7v1.5h-7zM980 364.00h4v1.5h-4zM915 366.00h5v1.5h-5zM921 366.00h10v1.5h-10zM932 366.00h4v1.5h-4zM937 366.00h2v1.5h-2zM940 366.00h4v1.5h-4zM915 382.00h6v1.5h-6zM922 382.00h8v1.5h-8zM931 382.00h4v1.5h-4zM936 382.00h8v1.5h-8zM945 382.00h3v1.5h-3zM950 382.00h10v1.5h-10zM961 382.00h2v1.5h-2zM964 382.00h10v1.5h-10zM975 382.00h4v1.5h-4zM980 382.00h3v1.5h-3zM984 382.00h1v1.5h-1zM914 388.00h2v1.5h-2zM915 390.00h1v1.5h-1zM917 390.00h4v1.5h-4zM922 390.00h5v1.5h-5zM928 390.00h3v1.5h-3zM932 390.00h6v1.5h-6zM915 392.00h1v1.5h-1zM917 392.00h7v1.5h-7zM925 392.00h8v1.5h-8zM934 392.00h2v1.5h-2zM937 392.00h2v1.5h-2zM940 392.00h8v1.5h-8zM949 392.00h4v1.5h-4zM954 392.00h7v1.5h-7zM962 392.00h5v1.5h-5zM968 392.00h2v1.5h-2zM971 392.00h7v1.5h-7zM979 392.00h3v1.5h-3zM983 392.00h2v1.5h-2zM915 394.00h1v1.5h-1zM915 396.00h1v1.5h-1zM917 396.00h8v1.5h-8zM926 396.00h3v1.5h-3zM930 396.00h8v1.5h-8zM939 396.00h3v1.5h-3zM943 396.00h7v1.5h-7zM951 396.00h5v1.5h-5zM957 396.00h3v1.5h-3zM961 396.00h5v1.5h-5zM967 396.00h4v1.5h-4zM972 396.00h3v1.5h-3zM915 398.00h1v1.5h-1zM917 398.00h4v1.5h-4zM922 398.00h7v1.5h-7zM930 398.00h7v1.5h-7zM938 398.00h6v1.5h-6zM945 398.00h3v1.5h-3zM949 398.00h7v1.5h-7zM957 398.00h5v1.5h-5zM963 398.00h2v1.5h-2zM966 398.00h10v1.5h-10zM977 398.00h4v1.5h-4zM982 398.00h3v1.5h-3zM915 400.00h1v1.5h-1zM917 400.00h10v1.5h-10zM928 400.00h4v1.5h-4zM933 400.00h5v1.5h-5zM939 400.00h5v1.5h-5zM945 400.00h5v1.5h-5zM951 400.00h10v1.5h-10zM962 400.00h7v1.5h-7zM914 404.00h4v1.5h-4zM919 404.00h2v1.5h-2zM922 404.00h7v1.5h-7zM930 404.00h2v1.5h-2zM933 404.00h7v1.5h-7zM941 404.00h4v1.5h-4zM950 408.00h3v1.5h-3zM954 408.00h4v1.5h-4zM959 408.00h7v1.5h-7zM967 408.00h5v1.5h-5zM973 408.00h8v1.5h-8zM982 408.00h3v1.5h-3zM950 410.00h7v1.5h-7zM958 410.00h7v1.5h-7zM966 410.00h7v1.5h-7zM974 410.00h3v1.5h-3zM978 410.00h7v1.5h-7zM950 412.00h4v1.5h-4zM955 412.00h5v1.5h-5zM961 412.00h3v1.5h-3zM965 412.00h7v1.5h-7zM973 412.00h2v1.5h-2zM976 412.00h5v1.5h-5zM982 412.00h3v1.5h-3zM915 413.00h3v1.5h-3zM919 413.00h8v1.5h-8zM928 413.00h7v1.5h-7zM936 413.00h5v1.5h-5zM942 413.00h2v1.5h-2zM950 413.00h4v1.5h-4zM955 413.00h4v1.5h-4zM960 413.00h3v1.5h-3zM964 413.00h10v1.5h-10zM975 413.00h3v1.5h-3zM979 413.00h4v1.5h-4zM984 413.00h1v1.5h-1zM915 417.00h5v1.5h-5zM921 417.00h5v1.5h-5zM927 417.00h4v1.5h-4zM932 417.00h10v1.5h-10zM943 417.00h8v1.5h-8zM952 417.00h5v1.5h-5zM958 417.00h3v1.5h-3zM962 417.00h5v1.5h-5zM968 417.00h4v1.5h-4zM915 419.00h7v1.5h-7zM923 419.00h7v1.5h-7zM931 419.00h6v1.5h-6zM938 419.00h2v1.5h-2zM941 419.00h4v1.5h-4zM946 419.00h2v1.5h-2zM949 419.00h7v1.5h-7zM957 419.00h7v1.5h-7zM965 419.00h6v1.5h-6zM972 419.00h5v1.5h-5zM978 419.00h4v1.5h-4zM915 425.00h6v1.5h-6zM922 425.00h5v1.5h-5zM928 425.00h6v1.5h-6zM935 425.00h5v1.5h-5zM941 425.00h3v1.5h-3zM945 425.00h5v1.5h-5zM951 425.00h2v1.5h-2zM954 425.00h5v1.5h-5zM960 425.00h5v1.5h-5zM966 425.00h6v1.5h-6zM973 425.00h3v1.5h-3zM977 425.00h4v1.5h-4zM982 425.00h2v1.5h-2zM915 427.00h5v1.5h-5zM921 427.00h5v1.5h-5zM927 427.00h5v1.5h-5zM933 427.00h3v1.5h-3zM937 427.00h6v1.5h-6zM944 427.00h6v1.5h-6zM951 427.00h10v1.5h-10zM962 427.00h3v1.5h-3zM966 427.00h5v1.5h-5zM972 427.00h6v1.5h-6zM979 427.00h5v1.5h-5zM915 429.00h2v1.5h-2zM918 429.00h5v1.5h-5zM924 429.00h3v1.5h-3zM928 429.00h2v1.5h-2zM931 429.00h5v1.5h-5zM937 429.00h4v1.5h-4zM942 429.00h4v1.5h-4zM947 429.00h5v1.5h-5zM953 429.00h6v1.5h-6zM960 429.00h8v1.5h-8zM969 429.00h5v1.5h-5zM975 429.00h4v1.5h-4zM980 429.00h5v1.5h-5zM915 431.00h6v1.5h-6zM922 431.00h2v1.5h-2zM925 431.00h6v1.5h-6zM932 431.00h8v1.5h-8zM941 431.00h8v1.5h-8zM950 431.00h4v1.5h-4zM956 431.00h3v1.5h-3zM960 431.00h2v1.5h-2zM963 431.00h6v1.5h-6zM970 431.00h7v1.5h-7zM978 431.00h7v1.5h-7zM915 437.00h1v1.5h-1zM919 437.00h4v1.5h-4zM924 437.00h5v1.5h-5zM930 437.00h7v1.5h-7zM938 437.00h2v1.5h-2zM941 437.00h8v1.5h-8zM950 437.00h4v1.5h-4zM955 437.00h4v1.5h-4zM960 437.00h7v1.5h-7zM968 437.00h6v1.5h-6zM975 437.00h5v1.5h-5zM981 437.00h4v1.5h-4zM915 439.00h1v1.5h-1zM919 439.00h5v1.5h-5zM925 439.00h5v1.5h-5zM931 439.00h5v1.5h-5zM937 439.00h6v1.5h-6zM944 439.00h4v1.5h-4zM949 439.00h5v1.5h-5zM955 439.00h4v1.5h-4zM915 441.00h1v1.5h-1zM919 441.00h8v1.5h-8zM928 441.00h6v1.5h-6zM935 441.00h3v1.5h-3zM939 441.00h4v1.5h-4zM944 441.00h4v1.5h-4zM914 451.00h3v1.5h-3zM918 451.00h4v1.5h-4zM923 451.00h8v1.5h-8zM932 451.00h7v1.5h-7zM940 451.00h8v1.5h-8zM949 451.00h4v1.5h-4zM954 451.00h7v1.5h-7zM962 451.00h5v1.5h-5zM968 451.00h7v1.5h-7zM976 451.00h6v1.5h-6zM983 451.00h2v1.5h-2zM914 453.00h8v1.5h-8zM923 453.00h4v1.5h-4zM928 453.00h4v1.5h-4zM933 453.00h3v1.5h-3zM937 453.00h4v1.5h-4zM942 453.00h4v1.5h-4zM960 453.00h8v1.5h-8zM969 453.00h3v1.5h-3zM973 453.00h5v1.5h-5zM979 453.00h4v1.5h-4zM984 453.00h1v1.5h-1zM914 455.00h5v1.5h-5zM920 455.00h10v1.5h-10zM931 455.00h4v1.5h-4zM936 455.00h2v1.5h-2zM939 455.00h6v1.5h-6zM946 455.00h6v1.5h-6zM953 455.00h6v1.5h-6zM960 455.00h8v1.5h-8zM969 455.00h4v1.5h-4zM974 455.00h6v1.5h-6zM981 455.00h4v1.5h-4zM914 457.00h5v1.5h-5zM920 457.00h2v1.5h-2zM923 457.00h7v1.5h-7zM931 457.00h4v1.5h-4zM914 461.00h3v1.5h-3zM915 462.00h1v1.5h-1zM917 462.00h5v1.5h-5zM923 462.00h4v1.5h-4zM928 462.00h8v1.5h-8zM937 462.00h8v1.5h-8zM946 462.00h4v1.5h-4zM951 462.00h3v1.5h-3zM955 462.00h5v1.5h-5zM961 462.00h4v1.5h-4zM966 462.00h6v1.5h-6zM973 462.00h6v1.5h-6zM980 462.00h5v1.5h-5zM915 464.00h1v1.5h-1zM917 464.00h6v1.5h-6zM924 464.00h5v1.5h-5zM930 464.00h2v1.5h-2zM933 464.00h4v1.5h-4zM938 464.00h2v1.5h-2zM941 464.00h6v1.5h-6zM948 464.00h7v1.5h-7zM956 464.00h10v1.5h-10zM967 464.00h7v1.5h-7zM915 468.00h1v1.5h-1zM917 468.00h2v1.5h-2zM920 468.00h3v1.5h-3zM924 468.00h6v1.5h-6zM931 468.00h8v1.5h-8zM940 468.00h7v1.5h-7zM948 468.00h7v1.5h-7zM956 468.00h4v1.5h-4zM961 468.00h3v1.5h-3zM965 468.00h4v1.5h-4zM970 468.00h4v1.5h-4zM915 470.00h1v1.5h-1zM919 470.00h4v1.5h-4zM924 470.00h8v1.5h-8zM933 470.00h3v1.5h-3zM937 470.00h6v1.5h-6zM915 472.00h1v1.5h-1zM919 472.00h3v1.5h-3zM923 472.00h8v1.5h-8zM932 472.00h2v1.5h-2zM935 472.00h2v1.5h-2zM938 472.00h4v1.5h-4zM943 472.00h4v1.5h-4zM948 472.00h10v1.5h-10zM959 472.00h2v1.5h-2zM962 472.00h5v1.5h-5zM968 472.00h4v1.5h-4zM973 472.00h4v1.5h-4zM915 474.00h1v1.5h-1zM919 474.00h8v1.5h-8zM928 474.00h6v1.5h-6zM935 474.00h3v1.5h-3zM939 474.00h3v1.5h-3zM943 474.00h3v1.5h-3zM947 474.00h5v1.5h-5zM953 474.00h7v1.5h-7zM915 478.00h1v1.5h-1zM919 478.00h10v1.5h-10zM930 478.00h4v1.5h-4zM935 478.00h6v1.5h-6zM942 478.00h5v1.5h-5zM948 478.00h4v1.5h-4zM953 478.00h10v1.5h-10zM964 478.00h2v1.5h-2zM967 478.00h2v1.5h-2zM970 478.00h4v1.5h-4zM915 480.00h1v1.5h-1zM919 480.00h5v1.5h-5zM925 480.00h7v1.5h-7zM933 480.00h5v1.5h-5zM939 480.00h4v1.5h-4zM915 482.00h1v1.5h-1zM919 482.00h4v1.5h-4zM924 482.00h7v1.5h-7zM932 482.00h8v1.5h-8zM941 482.00h4v1.5h-4zM946 482.00h1v1.5h-1zM915 484.00h1v1.5h-1zM919 484.00h4v1.5h-4zM924 484.00h2v1.5h-2zM927 484.00h6v1.5h-6zM934 484.00h5v1.5h-5zM940 484.00h2v1.5h-2zM943 484.00h2v1.5h-2zM946 484.00h4v1.5h-4zM951 484.00h7v1.5h-7zM959 484.00h6v1.5h-6zM966 484.00h3v1.5h-3zM970 484.00h5v1.5h-5zM915 486.00h1v1.5h-1zM919 486.00h4v1.5h-4zM924 486.00h6v1.5h-6zM931 486.00h5v1.5h-5zM937 486.00h4v1.5h-4zM942 486.00h7v1.5h-7zM950 486.00h2v1.5h-2zM953 486.00h5v1.5h-5zM959 486.00h6v1.5h-6zM966 486.00h5v1.5h-5zM972 486.00h3v1.5h-3zM915 488.00h1v1.5h-1zM919 488.00h4v1.5h-4zM924 488.00h2v1.5h-2zM927 488.00h5v1.5h-5zM933 488.00h8v1.5h-8zM942 488.00h3v1.5h-3zM946 488.00h4v1.5h-4zM951 488.00h7v1.5h-7zM959 488.00h4v1.5h-4zM964 488.00h5v1.5h-5zM970 488.00h4v1.5h-4zM915 492.00h1v1.5h-1zM919 492.00h4v1.5h-4zM924 492.00h7v1.5h-7zM932 492.00h4v1.5h-4zM937 492.00h5v1.5h-5zM943 492.00h1v1.5h-1zM915 494.00h1v1.5h-1zM919 494.00h3v1.5h-3zM923 494.00h10v1.5h-10zM934 494.00h7v1.5h-7zM942 494.00h7v1.5h-7zM915 496.00h1v1.5h-1zM919 496.00h4v1.5h-4zM924 496.00h4v1.5h-4zM929 496.00h7v1.5h-7zM937 496.00h6v1.5h-6zM944 496.00h2v1.5h-2zM947 496.00h10v1.5h-10zM958 496.00h4v1.5h-4zM963 496.00h6v1.5h-6zM970 496.00h2v1.5h-2zM973 496.00h3v1.5h-3zM915 498.00h1v1.5h-1zM919 498.00h2v1.5h-2zM922 498.00h10v1.5h-10zM933 498.00h4v1.5h-4zM938 498.00h6v1.5h-6zM945 498.00h2v1.5h-2zM948 498.00h2v1.5h-2zM951 498.00h4v1.5h-4zM956 498.00h6v1.5h-6zM963 498.00h6v1.5h-6zM915 500.00h1v1.5h-1zM919 500.00h5v1.5h-5zM925 500.00h3v1.5h-3zM929 500.00h3v1.5h-3zM933 500.00h4v1.5h-4zM938 500.00h5v1.5h-5zM944 500.00h4v1.5h-4zM949 500.00h4v1.5h-4zM954 500.00h8v1.5h-8zM915 502.00h1v1.5h-1zM919 502.00h7v1.5h-7zM927 502.00h2v1.5h-2zM930 502.00h5v1.5h-5zM936 502.00h6v1.5h-6zM943 502.00h5v1.5h-5zM949 502.00h5v1.5h-5zM955 502.00h7v1.5h-7zM963 502.00h4v1.5h-4zM968 502.00h3v1.5h-3zM972 502.00h2v1.5h-2zM975 502.00h3v1.5h-3zM979 502.00h5v1.5h-5zM915 504.00h1v1.5h-1zM919 504.00h3v1.5h-3zM923 504.00h5v1.5h-5zM929 504.00h6v1.5h-6zM936 504.00h3v1.5h-3zM940 504.00h8v1.5h-8zM949 504.00h4v1.5h-4zM954 504.00h6v1.5h-6zM961 504.00h5v1.5h-5zM967 504.00h5v1.5h-5zM973 504.00h6v1.5h-6zM980 504.00h3v1.5h-3zM984 504.00h1v1.5h-1zM915 508.00h1v1.5h-1zM919 508.00h7v1.5h-7zM927 508.00h4v1.5h-4zM932 508.00h5v1.5h-5zM938 508.00h8v1.5h-8zM947 508.00h7v1.5h-7zM915 510.00h1v1.5h-1zM919 510.00h4v1.5h-4zM924 510.00h5v1.5h-5zM930 510.00h5v1.5h-5zM915 513.00h1v1.5h-1zM919 513.00h7v1.5h-7zM927 513.00h2v1.5h-2zM930 513.00h6v1.5h-6zM937 513.00h3v1.5h-3zM915 515.00h1v1.5h-1zM919 515.00h6v1.5h-6zM926 515.00h2v1.5h-2zM929 515.00h6v1.5h-6zM936 515.00h2v1.5h-2zM939 515.00h7v1.5h-7zM947 515.00h3v1.5h-3zM951 515.00h2v1.5h-2zM954 515.00h5v1.5h-5zM960 515.00h4v1.5h-4zM965 515.00h3v1.5h-3zM969 515.00h10v1.5h-10zM980 515.00h5v1.5h-5zM915 517.00h1v1.5h-1zM919 517.00h5v1.5h-5zM925 517.00h5v1.5h-5zM931 517.00h5v1.5h-5zM937 517.00h10v1.5h-10zM948 517.00h2v1.5h-2zM951 517.00h5v1.5h-5zM957 517.00h5v1.5h-5zM963 517.00h5v1.5h-5zM969 517.00h5v1.5h-5zM975 517.00h2v1.5h-2zM978 517.00h7v1.5h-7zM915 519.00h1v1.5h-1zM919 519.00h3v1.5h-3zM923 519.00h2v1.5h-2zM926 519.00h4v1.5h-4zM931 519.00h3v1.5h-3zM935 519.00h7v1.5h-7zM943 519.00h7v1.5h-7zM951 519.00h6v1.5h-6zM958 519.00h5v1.5h-5zM964 519.00h6v1.5h-6zM971 519.00h7v1.5h-7zM979 519.00h4v1.5h-4zM984 519.00h1v1.5h-1zM915 521.00h1v1.5h-1zM919 521.00h4v1.5h-4zM924 521.00h2v1.5h-2zM927 521.00h5v1.5h-5zM933 521.00h4v1.5h-4zM938 521.00h10v1.5h-10zM949 521.00h4v1.5h-4zM954 521.00h5v1.5h-5zM960 521.00h5v1.5h-5zM966 521.00h7v1.5h-7zM916 523.00h5v1.5h-5zM922 523.00h10v1.5h-10zM933 523.00h3v1.5h-3zM937 523.00h8v1.5h-8zM946 523.00h1v1.5h-1zM916 525.00h6v1.5h-6zM923 525.00h4v1.5h-4zM928 525.00h4v1.5h-4zM933 525.00h6v1.5h-6zM940 525.00h3v1.5h-3zM944 525.00h2v1.5h-2zM947 525.00h2v1.5h-2zM916 527.00h8v1.5h-8zM925 527.00h8v1.5h-8zM934 527.00h5v1.5h-5zM940 527.00h4v1.5h-4zM945 527.00h4v1.5h-4zM916 529.00h3v1.5h-3zM920 529.00h3v1.5h-3zM924 529.00h5v1.5h-5zM930 529.00h10v1.5h-10zM941 529.00h2v1.5h-2zM916 531.00h4v1.5h-4zM921 531.00h3v1.5h-3zM925 531.00h6v1.5h-6zM932 531.00h7v1.5h-7zM940 531.00h1v1.5h-1zM914 535.00h3v1.5h-3zM915 537.00h1v1.5h-1zM917 537.00h4v1.5h-4zM922 537.00h4v1.5h-4zM927 537.00h6v1.5h-6zM934 537.00h7v1.5h-7zM942 537.00h10v1.5h-10zM953 537.00h4v1.5h-4zM958 537.00h8v1.5h-8zM967 537.00h3v1.5h-3zM971 537.00h4v1.5h-4zM915 541.00h1v1.5h-1zM917 541.00h5v1.5h-5zM923 541.00h5v1.5h-5zM929 541.00h10v1.5h-10zM940 541.00h5v1.5h-5zM946 541.00h5v1.5h-5zM952 541.00h5v1.5h-5zM958 541.00h5v1.5h-5zM964 541.00h4v1.5h-4zM969 541.00h3v1.5h-3zM914 545.00h4v1.5h-4zM919 545.00h4v1.5h-4zM924 545.00h4v1.5h-4zM929 545.00h4v1.5h-4zM934 545.00h4v1.5h-4zM939 545.00h5v1.5h-5zM945 545.00h4v1.5h-4zM914 547.00h3v1.5h-3zM915 551.00h1v1.5h-1zM917 551.00h5v1.5h-5zM923 551.00h3v1.5h-3zM927 551.00h6v1.5h-6zM934 551.00h5v1.5h-5zM940 551.00h4v1.5h-4zM945 551.00h8v1.5h-8zM954 551.00h8v1.5h-8zM915 553.00h1v1.5h-1zM917 553.00h4v1.5h-4zM922 553.00h3v1.5h-3zM926 553.00h7v1.5h-7zM934 553.00h2v1.5h-2zM937 553.00h3v1.5h-3zM941 553.00h2v1.5h-2zM944 553.00h7v1.5h-7zM915 553.00h1v1.5h-1zM922 553.00h4v1.5h-4zM927 553.00h7v1.5h-7zM935 553.00h5v1.5h-5zM941 553.00h2v1.5h-2zM944 553.00h3v1.5h-3z"/><path fill="rgba(197,134,192,0.5)" d="M914 131.00h7v1.5h-7zM914 133.00h7v1.5h-7zM914 135.00h7v1.5h-7zM914 141.00h7v1.5h-7zM914 147.00h7v1.5h-7zM914 149.00h7v1.5h-7zM914 163.00h3v1.5h-3zM914 167.00h6v1.5h-6zM914 184.00h3v1.5h-3zM914 188.00h6v1.5h-6zM914 204.00h7v1.5h-7zM914 206.00h7v1.5h-7zM914 208.00h7v1.5h-7zM914 210.00h7v1.5h-7zM914 217.00h7v1.5h-7zM914 219.00h7v1.5h-7zM914 221.00h7v1.5h-7zM914 235.00h7v1.5h-7zM914 237.00h7v1.5h-7zM914 247.00h7v1.5h-7zM914 249.00h7v1.5h-7zM914 251.00h7v1.5h-7zM914 261.00h7v1.5h-7zM914 263.00h7v1.5h-7zM914 265.00h7v1.5h-7zM914 266.00h7v1.5h-7zM914 268.00h7v1.5h-7zM914 270.00h7v1.5h-7zM914 296.00h7v1.5h-7zM914 298.00h7v1.5h-7zM914 300.00h7v1.5h-7zM914 317.00h7v1.5h-7zM914 319.00h7v1.5h-7zM914 321.00h7v1.5h-7zM914 323.00h7v1.5h-7zM914 325.00h7v1.5h-7zM914 327.00h7v1.5h-7zM914 353.00h3v1.5h-3zM915 355.00h8v1.5h-8zM915 357.00h8v1.5h-8zM914 361.00h6v1.5h-6zM914 368.00h3v1.5h-3zM915 370.00h8v1.5h-8zM915 372.00h8v1.5h-8zM915 372.00h8v1.5h-8zM915 374.00h8v1.5h-8zM914 376.00h6v1.5h-6zM914 380.00h3v1.5h-3zM914 384.00h6v1.5h-6zM914 406.00h3v1.5h-3zM915 408.00h8v1.5h-8zM915 410.00h8v1.5h-8zM915 412.00h8v1.5h-8zM915 421.00h8v1.5h-8zM915 435.00h7v1.5h-7zM915 445.00h7v1.5h-7zM914 447.00h6v1.5h-6z"/><path fill="rgba(86,156,214,0.5)" d="M922 131.00h23v1.5h-23zM922 133.00h25v1.5h-25zM922 135.00h22v1.5h-22zM922 141.00h16v1.5h-16zM922 147.00h23v1.5h-23zM922 149.00h23v1.5h-23zM918 163.00h32v1.5h-32zM918 184.00h27v1.5h-27zM922 204.00h11v1.5h-11zM922 206.00h11v1.5h-11zM922 208.00h11v1.5h-11zM922 210.00h11v1.5h-11zM922 217.00h9v1.5h-9zM932 217.00h5v1.5h-5zM922 219.00h9v1.5h-9zM932 219.00h5v1.5h-5zM922 221.00h9v1.5h-9zM932 221.00h5v1.5h-5zM922 235.00h15v1.5h-15zM922 237.00h24v1.5h-24zM922 247.00h12v1.5h-12zM935 247.00h4v1.5h-4zM922 249.00h12v1.5h-12zM935 249.00h4v1.5h-4zM922 251.00h12v1.5h-12zM935 251.00h4v1.5h-4zM922 261.00h19v1.5h-19zM922 263.00h19v1.5h-19zM922 265.00h19v1.5h-19zM922 266.00h19v1.5h-19zM922 268.00h19v1.5h-19zM922 270.00h19v1.5h-19zM922 296.00h10v1.5h-10zM922 298.00h10v1.5h-10zM922 300.00h10v1.5h-10zM922 317.00h9v1.5h-9zM922 319.00h9v1.5h-9zM922 321.00h9v1.5h-9zM922 323.00h9v1.5h-9zM933 323.00h8v1.5h-8zM922 325.00h9v1.5h-9zM933 325.00h8v1.5h-8zM922 327.00h9v1.5h-9zM918 353.00h29v1.5h-29zM924 355.00h21v1.5h-21zM924 357.00h21v1.5h-21zM918 368.00h29v1.5h-29zM924 370.00h21v1.5h-21zM924 372.00h21v1.5h-21zM924 372.00h21v1.5h-21zM924 374.00h21v1.5h-21zM918 380.00h51v1.5h-51zM918 406.00h30v1.5h-30zM924 408.00h17v1.5h-17zM924 410.00h25v1.5h-25zM924 412.00h17v1.5h-17zM924 421.00h21v1.5h-21zM923 435.00h26v1.5h-26zM917 553.00h4v1.5h-4z"/><path fill="rgba(212,212,212,0.45)" d="M949 131.00h1v1.5h-1zM949 133.00h1v1.5h-1zM949 135.00h1v1.5h-1zM949 141.00h1v1.5h-1zM947 147.00h2v1.5h-2zM947 149.00h2v1.5h-2zM932 327.00h3v1.5h-3z"/><path fill="rgba(181,206,168,0.42)" d="M933 204.00h2v1.5h-2zM933 206.00h2v1.5h-2zM933 208.00h2v1.5h-2zM933 210.00h2v1.5h-2zM933 296.00h2v1.5h-2zM933 298.00h2v1.5h-2zM933 300.00h2v1.5h-2zM932 317.00h1v1.5h-1zM932 319.00h1v1.5h-1zM932 321.00h1v1.5h-1z"/><path fill="rgba(206,145,120,0.6)" d="M944 408.00h1v1.5h-1zM947 421.00h5v1.5h-5z"/><path fill="rgba(20,20,20,0.7)" d="M947 453.00h12v1.5h-12z"/></g></svg>
<div style="position:absolute;left:914px;top:449.3px;width:71px;height:6.5px;background:rgba(106,153,85,0.25);"></div>
<div style="position:absolute;left:914px;top:309.4px;width:71px;height:4.2px;background:#8f5a1c;"></div>
<div style="position:absolute;left:914px;top:309.4px;width:24px;height:4.2px;background:#c98a2a;"></div>
<div style="position:absolute;left:933px;top:321px;width:52px;height:1.2px;background:#285f94;"></div>
<div style="position:absolute;left:986px;top:299px;width:13px;height:19px;background:#464646;"></div>
<div style="position:absolute;left:990px;top:304.3px;width:5px;height:6.4px;background:#b07a30;"></div>
<div style="position:absolute;left:986px;top:308.2px;width:13px;height:1.6px;background:#c8c8c8;"></div>
</body></html>
